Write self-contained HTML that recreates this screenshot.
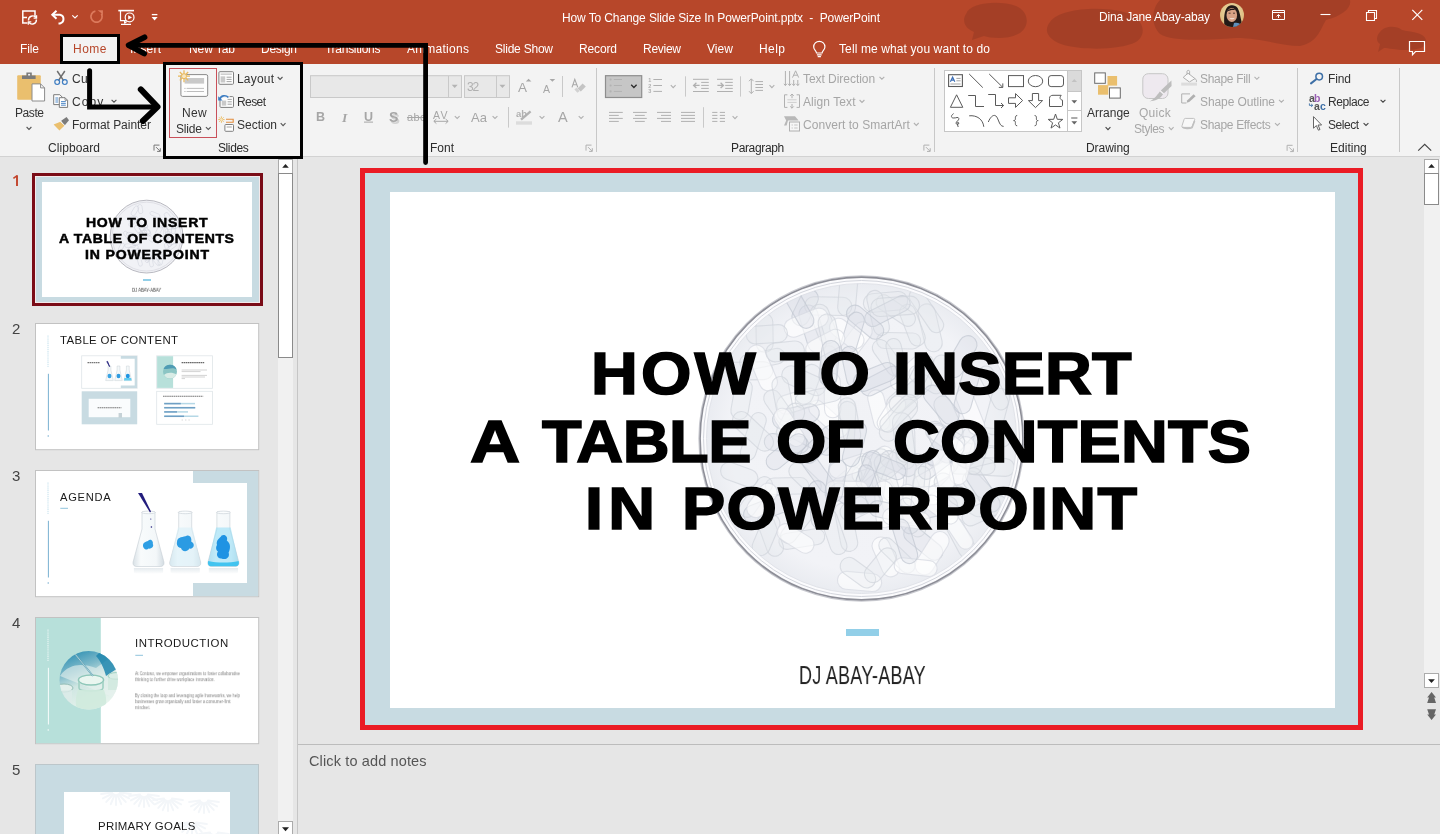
<!DOCTYPE html>
<html><head><meta charset="utf-8"><title>PowerPoint</title>
<style>
*{margin:0;padding:0;box-sizing:border-box}
html,body{width:1440px;height:834px;overflow:hidden;background:#e6e6e6;font-family:"Liberation Sans",sans-serif}
.a{position:absolute}
.t{position:absolute;white-space:pre;font-family:"Liberation Sans",sans-serif;will-change:transform}
svg{position:absolute;overflow:visible}
#app{position:absolute;left:0;top:0;width:1440px;height:834px;overflow:hidden;background:#e6e6e6}

</style></head>
<body>
<div id="app">
<!-- title bar + tabs -->
<div class="a" style="left:0;top:0;width:1440px;height:64px;background:#b7472a"></div>
<svg style="left:0;top:0" width="1440" height="64" viewBox="0 0 1440 64">
 <g fill="#7a2f1e" opacity="0.30">
  <path d="M966 14 C970 2 1000 0 1016 6 C1030 12 1030 28 1018 34 C1006 40 990 38 984 36 L972 40 L974 32 C964 28 962 20 966 14Z"/>
  <path d="M1050 22 C1060 8 1100 6 1124 12 C1144 18 1148 34 1136 42 C1120 50 1086 50 1068 46 C1050 42 1042 32 1050 22Z"/>
  <path d="M1160 0 H1350 C1352 8 1342 16 1326 20 C1320 30 1318 42 1300 46 C1280 46 1262 38 1236 38 C1206 40 1172 42 1160 34 C1150 24 1152 8 1160 0Z"/>
  <path d="M1380 32 C1384 26 1396 25 1402 30 C1410 32 1424 32 1426 40 C1428 48 1416 50 1404 50 C1396 50 1388 48 1384 48 L1378 52 L1380 44 C1376 42 1376 36 1380 32Z"/>
 </g>
</svg>
<!-- ribbon -->
<div class="a" style="left:0;top:64px;width:1440px;height:92px;background:#f3f3f3"></div>
<div class="a" style="left:0;top:156px;width:1440px;height:1px;background:#d2d2d2"></div>
<!-- home tab -->
<div class="a" style="left:60px;top:34px;width:60px;height:30px;background:#f3f3f3"></div>
<!-- group separators -->
<div class="a" style="left:163px;top:68px;width:1px;height:84px;background:#c8c8c8"></div>
<div class="a" style="left:596px;top:68px;width:1px;height:84px;background:#c8c8c8"></div>
<div class="a" style="left:934px;top:68px;width:1px;height:84px;background:#c8c8c8"></div>
<div class="a" style="left:1297px;top:68px;width:1px;height:84px;background:#c8c8c8"></div>
<div class="a" style="left:1399px;top:68px;width:1px;height:84px;background:#c8c8c8"></div>
<!-- left pane -->
<div class="a" style="left:297px;top:157px;width:1px;height:677px;background:#c6c6c6"></div>
<div class="a" style="left:278px;top:159px;width:15px;height:675px;background:#f1f1f1"></div>
<div class="a" style="left:278px;top:159px;width:15px;height:15px;background:#fff;border:1px solid #ababab"></div>
<div class="a" style="left:278px;top:173px;width:15px;height:185px;background:#fff;border:1px solid #8a8a8a"></div>
<div class="a" style="left:278px;top:821px;width:15px;height:14px;background:#fff;border:1px solid #ababab"></div>
<svg style="left:278px;top:159px" width="15" height="15"><path d="M4.2 8.8 L7.5 5 L10.8 8.8Z" fill="#222"/></svg>
<svg style="left:278px;top:821px" width="15" height="14"><path d="M4 6.3 L7.5 10.2 L11 6.3Z" fill="#222"/></svg>
<!-- right scrollbar -->
<div class="a" style="left:1424px;top:159px;width:16px;height:515px;background:#f1f1f1"></div>
<div class="a" style="left:1424px;top:159px;width:15px;height:15px;background:#fff;border:1px solid #ababab"></div>
<div class="a" style="left:1424px;top:173px;width:15px;height:32px;background:#fff;border:1px solid #8a8a8a"></div>
<div class="a" style="left:1424px;top:673px;width:15px;height:15px;background:#fff;border:1px solid #ababab"></div>
<svg style="left:1424px;top:159px" width="15" height="15"><path d="M4.2 8.8 L7.5 5 L10.8 8.8Z" fill="#222"/></svg>
<svg style="left:1424px;top:673px" width="15" height="15"><path d="M4.1 6.2 L7.5 10 L10.9 6.2Z" fill="#222"/></svg>
<svg style="left:1424px;top:690px" width="15" height="32"><g fill="#666"><path d="M7.6 2 L12 7.4 L10.2 7.4 L12 13 L3.2 13 L5 7.4 L3.2 7.4Z"/><path d="M7.6 30 L12 24.6 L10.2 24.6 L12 19.2 L3.2 19.2 L5 24.6 L3.2 24.6Z"/></g></svg>
<!-- notes -->
<div class="a" style="left:298px;top:744px;width:1142px;height:1px;background:#bcbcbc"></div>
<!-- main slide -->
<div class="a" style="left:360px;top:168px;width:1003px;height:562px;background:#c8dbe2;border:5px solid #ea1c25"></div>
<div class="a" style="left:390px;top:192px;width:945px;height:516px;background:#fff"></div>
<div class="a" style="left:846px;top:629px;width:33px;height:7px;background:#92cfe8"></div>
<svg style="left:0;top:0" width="1440" height="834" viewBox="0 0 1440 834">
<defs><radialGradient id="dg" cx="50%" cy="50%" r="50%"><stop offset="0" stop-color="#f1f2f6"/><stop offset="0.85" stop-color="#f2f3f7"/><stop offset="1" stop-color="#eaecf1"/></radialGradient><clipPath id="dc"><circle cx="861.5" cy="438.5" r="155"/></clipPath></defs>
<circle cx="861.5" cy="438.5" r="162.6" fill="#fafafc" stroke="#c9cad0" stroke-width="1.2"/>
<circle cx="861.5" cy="438.5" r="161.4" fill="#fbfbfd" stroke="#8d8e97" stroke-width="1.6"/>
<circle cx="861.5" cy="438.5" r="158" fill="none" stroke="#d3d5dc" stroke-width="1"/>
<circle cx="861.5" cy="438.5" r="155" fill="url(#dg)" stroke="#e1e3e9" stroke-width="1"/>
<g clip-path="url(#dc)" stroke-width="1.1">
<rect x="900.4" y="534.4" width="45.6" height="16.9" rx="8.5" fill="#d8dce4" fill-opacity="0.3" stroke="#c2c7d1" stroke-opacity="0.7" transform="rotate(39 923.3 542.9)"/>
<rect x="876.6" y="332.8" width="44.1" height="15.9" rx="8.0" fill="#e6e9ee" fill-opacity="0.28" stroke="#d0d4dc" stroke-opacity="0.7" transform="rotate(1 898.7 340.8)"/>
<rect x="804.7" y="410.9" width="47.5" height="15.9" rx="8.0" fill="#ffffff" fill-opacity="0.6" stroke="#d9dce3" stroke-opacity="0.8" transform="rotate(42 828.5 418.9)"/>
<rect x="962.7" y="427.8" width="48.5" height="17.5" rx="8.7" fill="#e6e9ee" fill-opacity="0.28" stroke="#d0d4dc" stroke-opacity="0.7" transform="rotate(6 987.0 436.6)"/>
<rect x="787.1" y="431.0" width="49.4" height="16.5" rx="8.2" fill="#d8dce4" fill-opacity="0.3" stroke="#c2c7d1" stroke-opacity="0.7" transform="rotate(28 811.8 439.3)"/>
<rect x="939.3" y="529.3" width="43.4" height="17.2" rx="8.6" fill="#e6e9ee" fill-opacity="0.28" stroke="#d0d4dc" stroke-opacity="0.7" transform="rotate(62 961.0 537.9)"/>
<rect x="848.2" y="456.5" width="48.4" height="15.9" rx="8.0" fill="#ffffff" fill-opacity="0.6" stroke="#d9dce3" stroke-opacity="0.8" transform="rotate(140 872.4 464.5)"/>
<rect x="973.4" y="402.6" width="47.1" height="18.1" rx="9.0" fill="#e6e9ee" fill-opacity="0.28" stroke="#d0d4dc" stroke-opacity="0.7" transform="rotate(105 996.9 411.6)"/>
<rect x="909.9" y="500.7" width="47.9" height="15.8" rx="7.9" fill="#d8dce4" fill-opacity="0.3" stroke="#c2c7d1" stroke-opacity="0.7" transform="rotate(166 933.9 508.6)"/>
<rect x="765.4" y="477.7" width="43.4" height="16.5" rx="8.3" fill="#e6e9ee" fill-opacity="0.28" stroke="#d0d4dc" stroke-opacity="0.7" transform="rotate(179 787.1 486.0)"/>
<rect x="882.1" y="436.5" width="46.6" height="19.0" rx="9.5" fill="#e6e9ee" fill-opacity="0.28" stroke="#d0d4dc" stroke-opacity="0.7" transform="rotate(89 905.5 446.0)"/>
<rect x="721.2" y="390.4" width="40.7" height="17.4" rx="8.7" fill="#e6e9ee" fill-opacity="0.28" stroke="#d0d4dc" stroke-opacity="0.7" transform="rotate(100 741.5 399.2)"/>
<rect x="865.8" y="483.7" width="42.2" height="18.7" rx="9.4" fill="#e6e9ee" fill-opacity="0.28" stroke="#d0d4dc" stroke-opacity="0.7" transform="rotate(62 886.9 493.1)"/>
<rect x="825.8" y="473.4" width="38.8" height="18.3" rx="9.1" fill="#e6e9ee" fill-opacity="0.28" stroke="#d0d4dc" stroke-opacity="0.7" transform="rotate(140 845.2 482.5)"/>
<rect x="788.3" y="319.4" width="48.8" height="18.8" rx="9.4" fill="#d8dce4" fill-opacity="0.3" stroke="#c2c7d1" stroke-opacity="0.7" transform="rotate(73 812.7 328.8)"/>
<rect x="946.1" y="403.1" width="48.6" height="17.0" rx="8.5" fill="#ffffff" fill-opacity="0.6" stroke="#d9dce3" stroke-opacity="0.8" transform="rotate(68 970.4 411.6)"/>
<rect x="884.0" y="388.1" width="38.8" height="18.2" rx="9.1" fill="#e6e9ee" fill-opacity="0.28" stroke="#d0d4dc" stroke-opacity="0.7" transform="rotate(139 903.4 397.2)"/>
<rect x="858.3" y="401.9" width="41.1" height="16.2" rx="8.1" fill="#ffffff" fill-opacity="0.6" stroke="#d9dce3" stroke-opacity="0.8" transform="rotate(76 878.8 410.0)"/>
<rect x="914.0" y="464.9" width="48.8" height="18.9" rx="9.5" fill="#e6e9ee" fill-opacity="0.28" stroke="#d0d4dc" stroke-opacity="0.7" transform="rotate(134 938.4 474.4)"/>
<rect x="837.4" y="572.5" width="44.3" height="17.9" rx="9.0" fill="#ffffff" fill-opacity="0.6" stroke="#d9dce3" stroke-opacity="0.8" transform="rotate(5 859.5 581.5)"/>
<rect x="905.8" y="319.1" width="48.6" height="17.4" rx="8.7" fill="#e6e9ee" fill-opacity="0.28" stroke="#d0d4dc" stroke-opacity="0.7" transform="rotate(77 930.1 327.8)"/>
<rect x="886.6" y="364.7" width="44.4" height="16.1" rx="8.1" fill="#ffffff" fill-opacity="0.6" stroke="#d9dce3" stroke-opacity="0.8" transform="rotate(138 908.9 372.8)"/>
<rect x="786.0" y="298.8" width="38.3" height="17.4" rx="8.7" fill="#d8dce4" fill-opacity="0.3" stroke="#c2c7d1" stroke-opacity="0.7" transform="rotate(116 805.1 307.5)"/>
<rect x="776.2" y="391.7" width="42.9" height="18.8" rx="9.4" fill="#ffffff" fill-opacity="0.6" stroke="#d9dce3" stroke-opacity="0.8" transform="rotate(163 797.6 401.1)"/>
<rect x="879.4" y="455.2" width="38.3" height="16.8" rx="8.4" fill="#d8dce4" fill-opacity="0.3" stroke="#c2c7d1" stroke-opacity="0.7" transform="rotate(25 898.5 463.6)"/>
<rect x="810.2" y="387.3" width="44.5" height="16.3" rx="8.1" fill="#ffffff" fill-opacity="0.6" stroke="#d9dce3" stroke-opacity="0.8" transform="rotate(89 832.4 395.5)"/>
<rect x="871.7" y="483.7" width="42.5" height="17.8" rx="8.9" fill="#ffffff" fill-opacity="0.6" stroke="#d9dce3" stroke-opacity="0.8" transform="rotate(99 893.0 492.6)"/>
<rect x="804.6" y="297.0" width="47.3" height="18.2" rx="9.1" fill="#e6e9ee" fill-opacity="0.28" stroke="#d0d4dc" stroke-opacity="0.7" transform="rotate(1 828.3 306.1)"/>
<rect x="959.0" y="479.1" width="40.1" height="17.8" rx="8.9" fill="#e6e9ee" fill-opacity="0.28" stroke="#d0d4dc" stroke-opacity="0.7" transform="rotate(46 979.1 488.1)"/>
<rect x="828.5" y="457.9" width="42.7" height="16.2" rx="8.1" fill="#ffffff" fill-opacity="0.6" stroke="#d9dce3" stroke-opacity="0.8" transform="rotate(162 849.9 466.0)"/>
<rect x="728.6" y="428.7" width="49.4" height="15.4" rx="7.7" fill="#e6e9ee" fill-opacity="0.28" stroke="#d0d4dc" stroke-opacity="0.7" transform="rotate(108 753.3 436.4)"/>
<rect x="826.7" y="286.7" width="41.7" height="17.8" rx="8.9" fill="#e6e9ee" fill-opacity="0.28" stroke="#d0d4dc" stroke-opacity="0.7" transform="rotate(95 847.6 295.6)"/>
<rect x="958.0" y="481.7" width="49.7" height="16.4" rx="8.2" fill="#d8dce4" fill-opacity="0.3" stroke="#c2c7d1" stroke-opacity="0.7" transform="rotate(57 982.9 489.9)"/>
<rect x="873.5" y="454.6" width="38.9" height="18.3" rx="9.1" fill="#e6e9ee" fill-opacity="0.28" stroke="#d0d4dc" stroke-opacity="0.7" transform="rotate(137 892.9 463.7)"/>
<rect x="823.8" y="415.9" width="45.7" height="16.8" rx="8.4" fill="#e6e9ee" fill-opacity="0.28" stroke="#d0d4dc" stroke-opacity="0.7" transform="rotate(93 846.7 424.3)"/>
<rect x="785.7" y="470.3" width="38.6" height="16.7" rx="8.4" fill="#e6e9ee" fill-opacity="0.28" stroke="#d0d4dc" stroke-opacity="0.7" transform="rotate(44 805.0 478.7)"/>
<rect x="890.7" y="317.3" width="43.5" height="15.9" rx="8.0" fill="#e6e9ee" fill-opacity="0.28" stroke="#d0d4dc" stroke-opacity="0.7" transform="rotate(69 912.5 325.2)"/>
<rect x="745.1" y="324.5" width="39.0" height="16.9" rx="8.5" fill="#e6e9ee" fill-opacity="0.28" stroke="#d0d4dc" stroke-opacity="0.7" transform="rotate(89 764.6 332.9)"/>
<rect x="938.3" y="347.6" width="45.5" height="18.0" rx="9.0" fill="#d8dce4" fill-opacity="0.3" stroke="#c2c7d1" stroke-opacity="0.7" transform="rotate(120 961.1 356.6)"/>
<rect x="803.0" y="314.6" width="40.9" height="18.7" rx="9.3" fill="#e6e9ee" fill-opacity="0.28" stroke="#d0d4dc" stroke-opacity="0.7" transform="rotate(69 823.5 324.0)"/>
<rect x="901.5" y="303.2" width="49.9" height="15.0" rx="7.5" fill="#e6e9ee" fill-opacity="0.28" stroke="#d0d4dc" stroke-opacity="0.7" transform="rotate(56 926.4 310.7)"/>
<rect x="796.0" y="466.0" width="44.6" height="15.3" rx="7.7" fill="#d8dce4" fill-opacity="0.3" stroke="#c2c7d1" stroke-opacity="0.7" transform="rotate(54 818.3 473.7)"/>
<rect x="837.1" y="329.9" width="39.3" height="18.8" rx="9.4" fill="#ffffff" fill-opacity="0.6" stroke="#d9dce3" stroke-opacity="0.8" transform="rotate(127 856.7 339.3)"/>
<rect x="778.7" y="531.0" width="46.2" height="16.0" rx="8.0" fill="#e6e9ee" fill-opacity="0.28" stroke="#d0d4dc" stroke-opacity="0.7" transform="rotate(171 801.8 539.0)"/>
<rect x="838.0" y="563.8" width="39.8" height="17.7" rx="8.9" fill="#e6e9ee" fill-opacity="0.28" stroke="#d0d4dc" stroke-opacity="0.7" transform="rotate(36 857.9 572.7)"/>
<rect x="821.5" y="518.6" width="49.3" height="16.9" rx="8.4" fill="#e6e9ee" fill-opacity="0.28" stroke="#d0d4dc" stroke-opacity="0.7" transform="rotate(79 846.1 527.1)"/>
<rect x="828.5" y="490.3" width="42.6" height="16.1" rx="8.0" fill="#d8dce4" fill-opacity="0.3" stroke="#c2c7d1" stroke-opacity="0.7" transform="rotate(34 849.8 498.3)"/>
<rect x="965.3" y="457.8" width="49.2" height="17.8" rx="8.9" fill="#e6e9ee" fill-opacity="0.28" stroke="#d0d4dc" stroke-opacity="0.7" transform="rotate(3 989.9 466.7)"/>
<rect x="948.7" y="458.3" width="46.4" height="16.0" rx="8.0" fill="#e6e9ee" fill-opacity="0.28" stroke="#d0d4dc" stroke-opacity="0.7" transform="rotate(1 971.9 466.3)"/>
<rect x="907.0" y="474.6" width="43.4" height="18.6" rx="9.3" fill="#ffffff" fill-opacity="0.6" stroke="#d9dce3" stroke-opacity="0.8" transform="rotate(67 928.8 483.9)"/>
<rect x="873.6" y="303.0" width="44.4" height="15.2" rx="7.6" fill="#e6e9ee" fill-opacity="0.28" stroke="#d0d4dc" stroke-opacity="0.7" transform="rotate(34 895.8 310.6)"/>
<rect x="772.1" y="407.1" width="47.6" height="18.4" rx="9.2" fill="#d8dce4" fill-opacity="0.3" stroke="#c2c7d1" stroke-opacity="0.7" transform="rotate(167 795.9 416.3)"/>
<rect x="952.7" y="441.5" width="39.0" height="18.6" rx="9.3" fill="#d8dce4" fill-opacity="0.3" stroke="#c2c7d1" stroke-opacity="0.7" transform="rotate(134 972.2 450.8)"/>
<rect x="851.1" y="462.8" width="47.8" height="17.4" rx="8.7" fill="#e6e9ee" fill-opacity="0.28" stroke="#d0d4dc" stroke-opacity="0.7" transform="rotate(112 875.0 471.5)"/>
<rect x="867.2" y="349.6" width="41.2" height="16.4" rx="8.2" fill="#e6e9ee" fill-opacity="0.28" stroke="#d0d4dc" stroke-opacity="0.7" transform="rotate(54 887.8 357.8)"/>
<rect x="872.1" y="405.2" width="38.8" height="17.0" rx="8.5" fill="#ffffff" fill-opacity="0.6" stroke="#d9dce3" stroke-opacity="0.8" transform="rotate(122 891.5 413.7)"/>
<rect x="837.9" y="465.1" width="38.4" height="17.0" rx="8.5" fill="#e6e9ee" fill-opacity="0.28" stroke="#d0d4dc" stroke-opacity="0.7" transform="rotate(123 857.1 473.6)"/>
<rect x="862.6" y="469.4" width="49.2" height="17.2" rx="8.6" fill="#e6e9ee" fill-opacity="0.28" stroke="#d0d4dc" stroke-opacity="0.7" transform="rotate(74 887.2 478.0)"/>
<rect x="827.3" y="324.6" width="38.9" height="18.3" rx="9.2" fill="#ffffff" fill-opacity="0.6" stroke="#d9dce3" stroke-opacity="0.8" transform="rotate(38 846.8 333.8)"/>
<rect x="774.9" y="515.9" width="45.5" height="15.7" rx="7.8" fill="#e6e9ee" fill-opacity="0.28" stroke="#d0d4dc" stroke-opacity="0.7" transform="rotate(128 797.6 523.8)"/>
<rect x="908.4" y="543.8" width="47.7" height="18.6" rx="9.3" fill="#ffffff" fill-opacity="0.6" stroke="#d9dce3" stroke-opacity="0.8" transform="rotate(122 932.2 553.1)"/>
<rect x="863.3" y="292.6" width="44.4" height="18.6" rx="9.3" fill="#e6e9ee" fill-opacity="0.28" stroke="#d0d4dc" stroke-opacity="0.7" transform="rotate(175 885.5 301.9)"/>
<rect x="969.7" y="380.5" width="47.5" height="15.0" rx="7.5" fill="#e6e9ee" fill-opacity="0.28" stroke="#d0d4dc" stroke-opacity="0.7" transform="rotate(63 993.5 388.0)"/>
<rect x="739.4" y="351.5" width="45.8" height="15.6" rx="7.8" fill="#e6e9ee" fill-opacity="0.28" stroke="#d0d4dc" stroke-opacity="0.7" transform="rotate(168 762.3 359.3)"/>
<rect x="885.4" y="385.0" width="50.0" height="17.2" rx="8.6" fill="#e6e9ee" fill-opacity="0.28" stroke="#d0d4dc" stroke-opacity="0.7" transform="rotate(140 910.4 393.6)"/>
<rect x="907.1" y="371.2" width="39.0" height="16.6" rx="8.3" fill="#e6e9ee" fill-opacity="0.28" stroke="#d0d4dc" stroke-opacity="0.7" transform="rotate(32 926.6 379.5)"/>
<rect x="876.6" y="350.3" width="39.6" height="15.1" rx="7.6" fill="#e6e9ee" fill-opacity="0.28" stroke="#d0d4dc" stroke-opacity="0.7" transform="rotate(76 896.4 357.9)"/>
<rect x="958.7" y="450.4" width="40.5" height="15.4" rx="7.7" fill="#e6e9ee" fill-opacity="0.28" stroke="#d0d4dc" stroke-opacity="0.7" transform="rotate(167 979.0 458.1)"/>
<rect x="924.5" y="366.4" width="39.5" height="16.0" rx="8.0" fill="#e6e9ee" fill-opacity="0.28" stroke="#d0d4dc" stroke-opacity="0.7" transform="rotate(76 944.2 374.4)"/>
<rect x="855.1" y="305.0" width="45.8" height="16.0" rx="8.0" fill="#e6e9ee" fill-opacity="0.28" stroke="#d0d4dc" stroke-opacity="0.7" transform="rotate(77 878.1 313.0)"/>
<rect x="764.2" y="435.0" width="44.5" height="16.8" rx="8.4" fill="#d8dce4" fill-opacity="0.3" stroke="#c2c7d1" stroke-opacity="0.7" transform="rotate(6 786.4 443.4)"/>
<rect x="726.1" y="361.9" width="46.8" height="17.9" rx="9.0" fill="#e6e9ee" fill-opacity="0.28" stroke="#d0d4dc" stroke-opacity="0.7" transform="rotate(179 749.5 370.9)"/>
<rect x="831.5" y="435.4" width="46.0" height="17.3" rx="8.7" fill="#d8dce4" fill-opacity="0.3" stroke="#c2c7d1" stroke-opacity="0.7" transform="rotate(104 854.5 444.0)"/>
<rect x="860.9" y="495.1" width="46.8" height="18.2" rx="9.1" fill="#ffffff" fill-opacity="0.6" stroke="#d9dce3" stroke-opacity="0.8" transform="rotate(87 884.3 504.3)"/>
<rect x="748.4" y="526.6" width="44.0" height="16.8" rx="8.4" fill="#e6e9ee" fill-opacity="0.28" stroke="#d0d4dc" stroke-opacity="0.7" transform="rotate(70 770.4 535.0)"/>
<rect x="738.3" y="359.0" width="48.4" height="18.0" rx="9.0" fill="#ffffff" fill-opacity="0.6" stroke="#d9dce3" stroke-opacity="0.8" transform="rotate(67 762.5 368.0)"/>
<rect x="862.8" y="303.2" width="49.1" height="15.8" rx="7.9" fill="#d8dce4" fill-opacity="0.3" stroke="#c2c7d1" stroke-opacity="0.7" transform="rotate(153 887.4 311.1)"/>
<rect x="910.4" y="468.5" width="45.6" height="15.6" rx="7.8" fill="#ffffff" fill-opacity="0.6" stroke="#d9dce3" stroke-opacity="0.8" transform="rotate(150 933.2 476.3)"/>
<rect x="808.4" y="358.2" width="40.6" height="15.8" rx="7.9" fill="#e6e9ee" fill-opacity="0.28" stroke="#d0d4dc" stroke-opacity="0.7" transform="rotate(90 828.8 366.2)"/>
<rect x="864.7" y="548.2" width="42.0" height="17.6" rx="8.8" fill="#ffffff" fill-opacity="0.6" stroke="#d9dce3" stroke-opacity="0.8" transform="rotate(66 885.8 557.0)"/>
<rect x="860.5" y="457.4" width="46.4" height="16.7" rx="8.3" fill="#d8dce4" fill-opacity="0.3" stroke="#c2c7d1" stroke-opacity="0.7" transform="rotate(22 883.7 465.7)"/>
<rect x="826.2" y="412.3" width="46.7" height="17.4" rx="8.7" fill="#e6e9ee" fill-opacity="0.28" stroke="#d0d4dc" stroke-opacity="0.7" transform="rotate(80 849.5 421.0)"/>
<rect x="925.5" y="408.7" width="45.6" height="17.5" rx="8.8" fill="#e6e9ee" fill-opacity="0.28" stroke="#d0d4dc" stroke-opacity="0.7" transform="rotate(66 948.3 417.5)"/>
<rect x="843.4" y="313.6" width="43.5" height="17.1" rx="8.5" fill="#d8dce4" fill-opacity="0.3" stroke="#c2c7d1" stroke-opacity="0.7" transform="rotate(40 865.1 322.1)"/>
<rect x="955.9" y="445.1" width="43.5" height="15.9" rx="7.9" fill="#e6e9ee" fill-opacity="0.28" stroke="#d0d4dc" stroke-opacity="0.7" transform="rotate(106 977.7 453.1)"/>
<rect x="928.9" y="482.4" width="40.0" height="18.2" rx="9.1" fill="#e6e9ee" fill-opacity="0.28" stroke="#d0d4dc" stroke-opacity="0.7" transform="rotate(59 948.9 491.5)"/>
<rect x="848.3" y="462.0" width="40.2" height="15.6" rx="7.8" fill="#d8dce4" fill-opacity="0.3" stroke="#c2c7d1" stroke-opacity="0.7" transform="rotate(112 868.4 469.8)"/>
<rect x="848.1" y="478.8" width="44.4" height="15.5" rx="7.7" fill="#d8dce4" fill-opacity="0.3" stroke="#c2c7d1" stroke-opacity="0.7" transform="rotate(73 870.3 486.5)"/>
<rect x="874.7" y="547.7" width="44.5" height="15.3" rx="7.7" fill="#e6e9ee" fill-opacity="0.28" stroke="#d0d4dc" stroke-opacity="0.7" transform="rotate(44 896.9 555.4)"/>
<rect x="893.2" y="466.8" width="44.9" height="18.3" rx="9.1" fill="#e6e9ee" fill-opacity="0.28" stroke="#d0d4dc" stroke-opacity="0.7" transform="rotate(94 915.7 476.0)"/>
<rect x="920.8" y="433.7" width="41.8" height="18.7" rx="9.3" fill="#d8dce4" fill-opacity="0.3" stroke="#c2c7d1" stroke-opacity="0.7" transform="rotate(64 941.7 443.1)"/>
<rect x="937.8" y="451.5" width="48.7" height="18.1" rx="9.0" fill="#ffffff" fill-opacity="0.6" stroke="#d9dce3" stroke-opacity="0.8" transform="rotate(104 962.2 460.6)"/>
<rect x="873.6" y="411.0" width="49.6" height="18.1" rx="9.1" fill="#e6e9ee" fill-opacity="0.28" stroke="#d0d4dc" stroke-opacity="0.7" transform="rotate(130 898.4 420.1)"/>
<rect x="882.4" y="502.8" width="46.0" height="17.6" rx="8.8" fill="#d8dce4" fill-opacity="0.3" stroke="#c2c7d1" stroke-opacity="0.7" transform="rotate(70 905.4 511.6)"/>
<rect x="915.8" y="456.1" width="39.1" height="16.3" rx="8.1" fill="#d8dce4" fill-opacity="0.3" stroke="#c2c7d1" stroke-opacity="0.7" transform="rotate(143 935.4 464.3)"/>
<rect x="889.7" y="495.1" width="39.3" height="17.6" rx="8.8" fill="#ffffff" fill-opacity="0.6" stroke="#d9dce3" stroke-opacity="0.8" transform="rotate(80 909.4 503.9)"/>
<rect x="744.4" y="526.1" width="43.1" height="17.8" rx="8.9" fill="#e6e9ee" fill-opacity="0.28" stroke="#d0d4dc" stroke-opacity="0.7" transform="rotate(113 766.0 535.0)"/>
<rect x="758.7" y="399.4" width="40.4" height="17.0" rx="8.5" fill="#e6e9ee" fill-opacity="0.28" stroke="#d0d4dc" stroke-opacity="0.7" transform="rotate(55 778.9 407.9)"/>
<rect x="894.1" y="559.2" width="43.1" height="15.8" rx="7.9" fill="#ffffff" fill-opacity="0.6" stroke="#d9dce3" stroke-opacity="0.8" transform="rotate(6 915.7 567.1)"/>
<rect x="895.9" y="368.2" width="46.0" height="15.9" rx="8.0" fill="#e6e9ee" fill-opacity="0.28" stroke="#d0d4dc" stroke-opacity="0.7" transform="rotate(117 918.9 376.2)"/>
<rect x="831.2" y="324.7" width="42.5" height="16.1" rx="8.1" fill="#d8dce4" fill-opacity="0.3" stroke="#c2c7d1" stroke-opacity="0.7" transform="rotate(107 852.4 332.8)"/>
<rect x="804.2" y="334.8" width="41.9" height="18.6" rx="9.3" fill="#ffffff" fill-opacity="0.6" stroke="#d9dce3" stroke-opacity="0.8" transform="rotate(152 825.2 344.1)"/>
<rect x="783.3" y="313.3" width="46.1" height="18.9" rx="9.4" fill="#ffffff" fill-opacity="0.6" stroke="#d9dce3" stroke-opacity="0.8" transform="rotate(158 806.3 322.7)"/>
<rect x="923.8" y="427.3" width="42.6" height="18.9" rx="9.5" fill="#e6e9ee" fill-opacity="0.28" stroke="#d0d4dc" stroke-opacity="0.7" transform="rotate(30 945.1 436.8)"/>
<rect x="787.3" y="375.2" width="41.2" height="18.2" rx="9.1" fill="#e6e9ee" fill-opacity="0.28" stroke="#d0d4dc" stroke-opacity="0.7" transform="rotate(110 807.9 384.3)"/>
<rect x="871.0" y="297.3" width="48.7" height="18.3" rx="9.1" fill="#e6e9ee" fill-opacity="0.28" stroke="#d0d4dc" stroke-opacity="0.7" transform="rotate(176 895.3 306.4)"/>
<rect x="805.3" y="329.8" width="49.6" height="17.6" rx="8.8" fill="#e6e9ee" fill-opacity="0.28" stroke="#d0d4dc" stroke-opacity="0.7" transform="rotate(78 830.2 338.6)"/>
<rect x="825.6" y="481.2" width="42.6" height="15.5" rx="7.8" fill="#ffffff" fill-opacity="0.6" stroke="#d9dce3" stroke-opacity="0.8" transform="rotate(1 846.9 489.0)"/>
<rect x="719.9" y="465.8" width="38.6" height="17.5" rx="8.8" fill="#e6e9ee" fill-opacity="0.28" stroke="#d0d4dc" stroke-opacity="0.7" transform="rotate(20 739.2 474.6)"/>
<rect x="810.6" y="523.7" width="46.5" height="16.7" rx="8.3" fill="#e6e9ee" fill-opacity="0.28" stroke="#d0d4dc" stroke-opacity="0.7" transform="rotate(71 833.8 532.0)"/>
<rect x="902.7" y="486.7" width="46.4" height="18.3" rx="9.2" fill="#ffffff" fill-opacity="0.6" stroke="#d9dce3" stroke-opacity="0.8" transform="rotate(176 925.9 495.9)"/>
<rect x="780.6" y="371.5" width="46.4" height="18.4" rx="9.2" fill="#e6e9ee" fill-opacity="0.28" stroke="#d0d4dc" stroke-opacity="0.7" transform="rotate(24 803.8 380.7)"/>
<rect x="918.5" y="395.6" width="45.6" height="18.3" rx="9.1" fill="#d8dce4" fill-opacity="0.3" stroke="#c2c7d1" stroke-opacity="0.7" transform="rotate(50 941.3 404.7)"/>
<rect x="926.7" y="432.3" width="40.0" height="16.4" rx="8.2" fill="#ffffff" fill-opacity="0.6" stroke="#d9dce3" stroke-opacity="0.8" transform="rotate(38 946.7 440.4)"/>
<rect x="859.0" y="372.4" width="44.9" height="17.2" rx="8.6" fill="#d8dce4" fill-opacity="0.3" stroke="#c2c7d1" stroke-opacity="0.7" transform="rotate(153 881.4 381.0)"/>
<rect x="794.6" y="389.3" width="47.1" height="15.4" rx="7.7" fill="#e6e9ee" fill-opacity="0.28" stroke="#d0d4dc" stroke-opacity="0.7" transform="rotate(167 818.2 397.0)"/>
<rect x="838.9" y="497.4" width="42.8" height="18.2" rx="9.1" fill="#e6e9ee" fill-opacity="0.28" stroke="#d0d4dc" stroke-opacity="0.7" transform="rotate(154 860.3 506.4)"/>
<rect x="831.2" y="358.9" width="41.9" height="16.2" rx="8.1" fill="#d8dce4" fill-opacity="0.3" stroke="#c2c7d1" stroke-opacity="0.7" transform="rotate(78 852.2 367.0)"/>
<rect x="879.0" y="428.1" width="49.6" height="18.7" rx="9.3" fill="#e6e9ee" fill-opacity="0.28" stroke="#d0d4dc" stroke-opacity="0.7" transform="rotate(83 903.7 437.4)"/>
<rect x="852.4" y="367.4" width="45.4" height="18.9" rx="9.5" fill="#d8dce4" fill-opacity="0.3" stroke="#c2c7d1" stroke-opacity="0.7" transform="rotate(158 875.1 376.9)"/>
<rect x="945.9" y="491.8" width="43.8" height="18.6" rx="9.3" fill="#e6e9ee" fill-opacity="0.28" stroke="#d0d4dc" stroke-opacity="0.7" transform="rotate(30 967.8 501.2)"/>
<rect x="933.3" y="520.9" width="46.7" height="15.1" rx="7.6" fill="#ffffff" fill-opacity="0.6" stroke="#d9dce3" stroke-opacity="0.8" transform="rotate(56 956.6 528.5)"/>
<rect x="765.7" y="342.0" width="38.8" height="18.8" rx="9.4" fill="#e6e9ee" fill-opacity="0.28" stroke="#d0d4dc" stroke-opacity="0.7" transform="rotate(174 785.1 351.4)"/>
<rect x="760.2" y="390.7" width="45.3" height="16.6" rx="8.3" fill="#e6e9ee" fill-opacity="0.28" stroke="#d0d4dc" stroke-opacity="0.7" transform="rotate(79 782.9 399.0)"/>
<rect x="868.9" y="504.0" width="47.2" height="15.9" rx="7.9" fill="#d8dce4" fill-opacity="0.3" stroke="#c2c7d1" stroke-opacity="0.7" transform="rotate(12 892.5 512.0)"/>
<rect x="891.0" y="509.4" width="41.8" height="16.0" rx="8.0" fill="#e6e9ee" fill-opacity="0.28" stroke="#d0d4dc" stroke-opacity="0.7" transform="rotate(63 911.9 517.4)"/>
<rect x="921.7" y="501.9" width="38.6" height="15.3" rx="7.7" fill="#ffffff" fill-opacity="0.6" stroke="#d9dce3" stroke-opacity="0.8" transform="rotate(36 941.0 509.5)"/>
<rect x="794.6" y="495.8" width="48.0" height="17.6" rx="8.8" fill="#d8dce4" fill-opacity="0.3" stroke="#c2c7d1" stroke-opacity="0.7" transform="rotate(85 818.6 504.6)"/>
<rect x="806.7" y="354.1" width="45.4" height="18.0" rx="9.0" fill="#d8dce4" fill-opacity="0.3" stroke="#c2c7d1" stroke-opacity="0.7" transform="rotate(96 829.4 363.1)"/>
<rect x="746.5" y="325.5" width="41.2" height="17.7" rx="8.8" fill="#e6e9ee" fill-opacity="0.28" stroke="#d0d4dc" stroke-opacity="0.7" transform="rotate(176 767.0 334.3)"/>
<rect x="875.4" y="405.3" width="46.7" height="16.1" rx="8.0" fill="#e6e9ee" fill-opacity="0.28" stroke="#d0d4dc" stroke-opacity="0.7" transform="rotate(135 898.7 413.3)"/>
<rect x="769.9" y="413.4" width="41.1" height="18.5" rx="9.2" fill="#e6e9ee" fill-opacity="0.28" stroke="#d0d4dc" stroke-opacity="0.7" transform="rotate(116 790.5 422.6)"/>
<rect x="895.7" y="483.1" width="49.6" height="15.8" rx="7.9" fill="#e6e9ee" fill-opacity="0.28" stroke="#d0d4dc" stroke-opacity="0.7" transform="rotate(97 920.5 491.0)"/>
<rect x="728.2" y="422.3" width="49.6" height="18.1" rx="9.1" fill="#e6e9ee" fill-opacity="0.28" stroke="#d0d4dc" stroke-opacity="0.7" transform="rotate(43 753.0 431.3)"/>
<rect x="732.8" y="488.8" width="46.1" height="16.0" rx="8.0" fill="#e6e9ee" fill-opacity="0.28" stroke="#d0d4dc" stroke-opacity="0.7" transform="rotate(125 755.8 496.9)"/>
<rect x="918.7" y="438.2" width="42.5" height="15.8" rx="7.9" fill="#d8dce4" fill-opacity="0.3" stroke="#c2c7d1" stroke-opacity="0.7" transform="rotate(121 940.0 446.1)"/>
<rect x="942.6" y="381.7" width="48.3" height="17.0" rx="8.5" fill="#d8dce4" fill-opacity="0.3" stroke="#c2c7d1" stroke-opacity="0.7" transform="rotate(106 966.8 390.2)"/>
<rect x="922.0" y="462.5" width="42.5" height="16.4" rx="8.2" fill="#ffffff" fill-opacity="0.6" stroke="#d9dce3" stroke-opacity="0.8" transform="rotate(77 943.3 470.7)"/>
<rect x="779.5" y="301.8" width="40.8" height="15.7" rx="7.9" fill="#d8dce4" fill-opacity="0.3" stroke="#c2c7d1" stroke-opacity="0.7" transform="rotate(60 799.9 309.6)"/>
<rect x="860.3" y="556.6" width="40.1" height="17.4" rx="8.7" fill="#e6e9ee" fill-opacity="0.28" stroke="#d0d4dc" stroke-opacity="0.7" transform="rotate(130 880.4 565.3)"/>
<rect x="960.6" y="502.3" width="48.2" height="16.9" rx="8.5" fill="#e6e9ee" fill-opacity="0.28" stroke="#d0d4dc" stroke-opacity="0.7" transform="rotate(155 984.7 510.8)"/>
<rect x="882.6" y="510.3" width="47.8" height="16.9" rx="8.4" fill="#ffffff" fill-opacity="0.6" stroke="#d9dce3" stroke-opacity="0.8" transform="rotate(8 906.5 518.7)"/>
<rect x="882.2" y="533.0" width="45.7" height="16.8" rx="8.4" fill="#d8dce4" fill-opacity="0.3" stroke="#c2c7d1" stroke-opacity="0.7" transform="rotate(73 905.1 541.4)"/>
<rect x="775.3" y="529.9" width="40.5" height="17.1" rx="8.5" fill="#ffffff" fill-opacity="0.6" stroke="#d9dce3" stroke-opacity="0.8" transform="rotate(32 795.6 538.4)"/>
<rect x="814.5" y="472.0" width="42.6" height="17.6" rx="8.8" fill="#d8dce4" fill-opacity="0.3" stroke="#c2c7d1" stroke-opacity="0.7" transform="rotate(99 835.8 480.8)"/>
<rect x="796.2" y="436.2" width="46.7" height="16.6" rx="8.3" fill="#d8dce4" fill-opacity="0.3" stroke="#c2c7d1" stroke-opacity="0.7" transform="rotate(135 819.6 444.5)"/>
<rect x="768.1" y="418.9" width="42.3" height="17.0" rx="8.5" fill="#ffffff" fill-opacity="0.6" stroke="#d9dce3" stroke-opacity="0.8" transform="rotate(57 789.3 427.4)"/>
<rect x="742.6" y="499.9" width="47.8" height="18.0" rx="9.0" fill="#d8dce4" fill-opacity="0.3" stroke="#c2c7d1" stroke-opacity="0.7" transform="rotate(159 766.5 509.0)"/>
<rect x="742.7" y="491.3" width="38.6" height="18.2" rx="9.1" fill="#ffffff" fill-opacity="0.6" stroke="#d9dce3" stroke-opacity="0.8" transform="rotate(127 762.0 500.4)"/>
<rect x="762.8" y="443.3" width="47.5" height="16.7" rx="8.4" fill="#d8dce4" fill-opacity="0.3" stroke="#c2c7d1" stroke-opacity="0.7" transform="rotate(141 786.5 451.7)"/>
</g></svg>
<!-- thumbnails -->
<svg style="left:0;top:0" width="30" height="200"><path d="M17 175.3 V185.9" stroke="#c2432a" stroke-width="1.9"/><path d="M13.4 178.4 L16.8 175.8" stroke="#c2432a" stroke-width="1.5"/></svg>
<div class="a" style="left:32px;top:172.5px;width:230.5px;height:133.5px;background:#f4e9ea;border:3px solid #7a0c17"></div>
<div class="a" style="left:36.3px;top:176.8px;width:222.4px;height:125px;background:#c8dbe2"></div>
<div class="a" style="left:42px;top:182px;width:210.4px;height:115px;background:#fff"></div>
<div class="a" style="left:143px;top:279.3px;width:7.8px;height:1.5px;background:#92cfe8"></div>
<svg style="left:0;top:0" width="300" height="834" viewBox="0 0 300 834">
<circle cx="146.6" cy="236.6" r="36.4" fill="#eff0f4" stroke="#a9aab2" stroke-width="0.8"/>
<circle cx="146.6" cy="236.6" r="34.4" fill="#f1f2f6" stroke="#d8d9e0" stroke-width="0.7"/>
<g fill="none" stroke="#c3c7d2" stroke-opacity="0.7" stroke-width="0.5">
<rect x="143.7" y="256.2" width="9.1" height="4.0" rx="2.0" transform="rotate(113 148.2 258.2)"/>
<rect x="144.4" y="236.1" width="10.5" height="3.7" rx="1.8" transform="rotate(42 149.7 238.0)"/>
<rect x="161.5" y="234.1" width="10.5" height="3.9" rx="1.9" transform="rotate(115 166.8 236.0)"/>
<rect x="155.0" y="253.6" width="10.6" height="3.9" rx="2.0" transform="rotate(133 160.3 255.6)"/>
<rect x="137.9" y="228.1" width="10.3" height="4.0" rx="2.0" transform="rotate(54 143.1 230.0)"/>
<rect x="168.7" y="239.8" width="9.4" height="4.1" rx="2.1" transform="rotate(158 173.4 241.9)"/>
<rect x="135.7" y="207.0" width="9.2" height="4.2" rx="2.1" transform="rotate(80 140.3 209.1)"/>
<rect x="167.8" y="224.0" width="8.3" height="3.5" rx="1.8" transform="rotate(39 171.9 225.7)"/>
<rect x="160.6" y="230.6" width="9.9" height="3.7" rx="1.9" transform="rotate(91 165.6 232.4)"/>
<rect x="128.6" y="246.1" width="9.8" height="4.0" rx="2.0" transform="rotate(163 133.5 248.0)"/>
<rect x="129.6" y="208.6" width="10.6" height="4.4" rx="2.2" transform="rotate(121 134.9 210.8)"/>
<rect x="155.3" y="257.8" width="10.9" height="4.3" rx="2.2" transform="rotate(102 160.8 259.9)"/>
<rect x="138.3" y="221.5" width="10.5" height="4.0" rx="2.0" transform="rotate(51 143.6 223.4)"/>
<rect x="166.2" y="245.4" width="11.0" height="3.5" rx="1.7" transform="rotate(144 171.6 247.1)"/>
<rect x="132.5" y="240.6" width="8.9" height="4.2" rx="2.1" transform="rotate(157 136.9 242.7)"/>
<rect x="164.7" y="240.9" width="8.1" height="4.1" rx="2.1" transform="rotate(60 168.8 242.9)"/>
<rect x="163.2" y="214.6" width="9.5" height="4.4" rx="2.2" transform="rotate(56 167.9 216.8)"/>
<rect x="162.7" y="245.4" width="8.1" height="3.6" rx="1.8" transform="rotate(73 166.8 247.2)"/>
<rect x="133.6" y="227.0" width="8.1" height="4.3" rx="2.1" transform="rotate(56 137.7 229.2)"/>
<rect x="168.9" y="227.5" width="9.1" height="3.9" rx="1.9" transform="rotate(94 173.5 229.4)"/>
<rect x="127.7" y="216.8" width="9.7" height="4.0" rx="2.0" transform="rotate(169 132.6 218.8)"/>
<rect x="122.2" y="233.9" width="10.2" height="3.6" rx="1.8" transform="rotate(54 127.3 235.7)"/>
<rect x="162.8" y="231.9" width="9.6" height="3.4" rx="1.7" transform="rotate(75 167.6 233.6)"/>
<rect x="138.0" y="232.6" width="9.8" height="4.0" rx="2.0" transform="rotate(11 143.0 234.6)"/>
<rect x="127.6" y="220.3" width="10.0" height="3.8" rx="1.9" transform="rotate(127 132.6 222.2)"/>
<rect x="142.2" y="230.2" width="8.2" height="4.1" rx="2.0" transform="rotate(173 146.3 232.2)"/>
<rect x="141.6" y="254.6" width="9.8" height="3.7" rx="1.9" transform="rotate(66 146.5 256.5)"/>
<rect x="134.9" y="251.2" width="9.8" height="3.7" rx="1.9" transform="rotate(68 139.7 253.1)"/>
<rect x="142.4" y="229.8" width="9.7" height="4.1" rx="2.1" transform="rotate(56 147.3 231.8)"/>
<rect x="146.8" y="260.8" width="8.7" height="3.6" rx="1.8" transform="rotate(78 151.1 262.6)"/>
<rect x="139.1" y="225.8" width="9.0" height="3.7" rx="1.9" transform="rotate(150 143.6 227.7)"/>
<rect x="117.2" y="245.0" width="8.5" height="3.7" rx="1.9" transform="rotate(117 121.4 246.9)"/>
<rect x="157.1" y="221.8" width="8.7" height="3.5" rx="1.8" transform="rotate(95 161.4 223.5)"/>
<rect x="150.9" y="259.4" width="10.5" height="3.6" rx="1.8" transform="rotate(50 156.2 261.2)"/>
<rect x="149.7" y="212.7" width="10.4" height="3.7" rx="1.9" transform="rotate(23 154.9 214.6)"/>
<rect x="135.4" y="260.0" width="8.8" height="3.7" rx="1.9" transform="rotate(75 139.8 261.9)"/>
<rect x="124.7" y="243.9" width="10.8" height="3.6" rx="1.8" transform="rotate(1 130.1 245.7)"/>
<rect x="167.0" y="225.1" width="11.0" height="3.8" rx="1.9" transform="rotate(171 172.4 227.0)"/>
<rect x="153.9" y="228.4" width="10.2" height="4.2" rx="2.1" transform="rotate(119 159.0 230.5)"/>
<rect x="126.4" y="232.9" width="9.0" height="3.6" rx="1.8" transform="rotate(12 130.9 234.7)"/>
</g>
<rect x="35.5" y="323.5" width="223.2" height="126.2" fill="#fff" stroke="#c2c2c2" stroke-width="1"/>
<path d="M48 335.5 V367.5" stroke="#b4d8e8" stroke-width="1.3" stroke-dasharray="1.2 0.7" opacity="0.6"/>
<path d="M48.4 373.8 V430.5" stroke="#6aa7cc" stroke-width="0.9"/>
<circle cx="48.2" cy="436.0" r="0.7" fill="#6aa7cc"/>
<rect x="81.7" y="355.8" width="55.5" height="32.5" fill="#fff" stroke="#dfe5e8" stroke-width="0.8"/>
<path d="M120.8 356 H137 V388 H120.8 V385.5 H134.7 V358.8 H120.8Z" fill="#c8dbe2"/>
<path d="M87.5 362.6 H99.5" stroke="#777" stroke-width="1.1" stroke-dasharray="1.6 0.5"/>
<path d="M108.1 366 V370 L105.7 380.6 H113.3 L110.9 370 V366Z" fill="#f4f8fa" stroke="#c8d0d6" stroke-width="0.5"/>
<ellipse cx="109.5" cy="376" rx="2" ry="2.2" fill="#3aa3e3"/>
<path d="M117.1 366 V370 L114.7 380.6 H122.3 L119.9 370 V366Z" fill="#f4f8fa" stroke="#c8d0d6" stroke-width="0.5"/>
<ellipse cx="118.5" cy="376" rx="2" ry="2.2" fill="#2f9be0"/>
<path d="M126.39999999999999 366 V370 L124.0 380.6 H131.6 L129.2 370 V366Z" fill="#f4f8fa" stroke="#c8d0d6" stroke-width="0.5"/>
<ellipse cx="127.8" cy="376" rx="2" ry="2.2" fill="#1f95e3"/>
<path d="M127.8 378 m-3.4 0 h6.8 l0.4 2.4 h-7.6z" fill="#63cdf0"/>
<path d="M106.8 361.6 L107.6 361.4 L109.6 366.6Z" stroke="#2a2780" stroke-width="0.8" fill="#2a2780"/>
<rect x="156.7" y="355.8" width="55.8" height="32.5" fill="#fff" stroke="#dfe5e8" stroke-width="0.8"/>
<rect x="157.1" y="356.2" width="16" height="31.7" fill="#b7e0da"/>
<circle cx="170" cy="371.7" r="7" fill="#8cc5c4"/><path d="M163.6 369 A7 7 0 0 1 176.6 369.4 C172 366.6 168 369.6 163.6 369Z" fill="#4f9cb4"/><path d="M164 375 C167 372 173 372 176.4 374.6 A7 7 0 0 1 164 375Z" fill="#d9ece6"/>
<path d="M181.6 362.6 H204.6" stroke="#666" stroke-width="1.1" stroke-dasharray="1.6 0.5"/>
<path d="M181.6 370 H207 M181.6 371.6 H200.6 M181.6 375.4 H207 M181.6 377 H205 M181.6 378.6 H185" stroke="#b5b5b5" stroke-width="0.6"/>
<rect x="81.7" y="391.3" width="55.5" height="33" fill="#c8dbe2"/>
<rect x="88.7" y="398.8" width="41.6" height="18.4" fill="#fafcfd"/>
<path d="M97.6 407.8 H121.4" stroke="#777" stroke-width="1.1" stroke-dasharray="1.6 0.5"/>
<path d="M118.6 413 h3.4 v4.6 h-3.4z" fill="#b9c7cd" opacity="0.8"/>
<rect x="156.7" y="391.3" width="55.8" height="33" fill="#fff" stroke="#dfe5e8" stroke-width="0.8"/>
<path d="M163 396.2 H203.2" stroke="#777" stroke-width="1.1" stroke-dasharray="1.6 0.5"/>
<path d="M164.2 403.6 H195" stroke="#b5d8e6" stroke-width="1.5"/><path d="M164.2 403.6 H180.8" stroke="#6f9fc4" stroke-width="1.5"/>
<path d="M164.2 407.7 H195.2" stroke="#b5d8e6" stroke-width="1.5"/><path d="M164.2 407.7 H195.2" stroke="#6f9fc4" stroke-width="1.5"/>
<path d="M164.2 411.9 H188" stroke="#b5d8e6" stroke-width="1.5"/><path d="M164.2 411.9 H177" stroke="#6f9fc4" stroke-width="1.5"/>
<path d="M164.2 416.3 H198.4" stroke="#b5d8e6" stroke-width="1.5"/><path d="M164.2 416.3 H184" stroke="#6f9fc4" stroke-width="1.5"/>
<path d="M181.6 420 h1.4 m2 0 h1.4 m2 0 h1.4" stroke="#c9c9c9" stroke-width="0.7"/>
<rect x="35.5" y="470.5" width="223.2" height="126.2" fill="#fff" stroke="#c2c2c2" stroke-width="1"/>
<rect x="193" y="471" width="65.2" height="125.2" fill="#c8dbe2"/>
<rect x="120" y="483" width="127" height="100" fill="#fff"/>
<path d="M48 482.5 V514.5" stroke="#b4d8e8" stroke-width="1.3" stroke-dasharray="1.2 0.7" opacity="0.6"/>
<path d="M48.4 520.8 V577.5" stroke="#6aa7cc" stroke-width="0.9"/>
<circle cx="48.2" cy="583.0" r="0.7" fill="#6aa7cc"/>
<path d="M60.3 508.3 H68" stroke="#8fc4dc" stroke-width="1"/>
<defs><linearGradient id="fl" x1="0" x2="1"><stop offset="0" stop-color="#d9e1e6"/><stop offset="0.25" stop-color="#f8fbfc"/><stop offset="0.75" stop-color="#f3f7f9"/><stop offset="1" stop-color="#d3dce2"/></linearGradient><linearGradient id="fr" x1="0" y1="0" x2="0" y2="1"><stop offset="0" stop-color="#e3e9ed"/><stop offset="1" stop-color="#fff"/></linearGradient></defs>
<path d="M142.0 512 V529 L133.5 560.5 C132.1 564.5 133.9 566.5 136.9 566.5 H160.1 C163.1 566.5 164.9 564.5 163.5 560.5 L155.0 529 V512Z" fill="url(#fl)" stroke="#c4cdd3" stroke-width="0.6"/>
<ellipse cx="148.5" cy="512.4" rx="6.9" ry="1.3" fill="#fbfdfe" stroke="#c4cdd3" stroke-width="0.6"/>
<path d="M133.9 568.1 H163.1 V572.5 C163.1 574.5 133.9 574.5 133.9 572.5Z" fill="url(#fr)" opacity="0.9"/>
<path d="M143 545 C143.4 541.4 147.4 541.8 148.4 540.4 C150.6 538.6 153.6 541 152.8 544 C154.4 546.6 151 549.2 148.6 548.6 C146.4 551 142.6 548.4 143 545Z" fill="#2f9fe4"/><circle cx="151.4" cy="527" r="0.8" fill="#27207f"/><circle cx="150.8" cy="519" r="0.6" fill="#27207f"/>
<path d="M178.7 512 V529 L170.2 560.5 C168.79999999999998 564.5 170.6 566.5 173.6 566.5 H196.79999999999998 C199.79999999999998 566.5 201.6 564.5 200.2 560.5 L191.7 529 V512Z" fill="url(#fl)" stroke="#c4cdd3" stroke-width="0.6"/>
<path d="M177.89999999999998 527.5 L170.4 560.5 C169.0 564.5 170.6 566.1 173.6 566.1 H196.79999999999998 C199.79999999999998 566.1 201.39999999999998 564.5 199.99999999999997 560.5 L192.5 527.5Z" fill="#d7eef8" opacity="0.55"/>
<ellipse cx="185.2" cy="512.4" rx="6.9" ry="1.3" fill="#fbfdfe" stroke="#c4cdd3" stroke-width="0.6"/>
<path d="M170.6 568.1 H199.79999999999998 V572.5 C199.79999999999998 574.5 170.6 574.5 170.6 572.5Z" fill="url(#fr)" opacity="0.9"/>
<path d="M177 542 C177 536.4 184 537.4 186.6 535.8 C190.6 534.6 192 539.2 191.2 541.6 C196 544 193.4 549.6 189.4 548.6 C186.8 552.8 181.6 551.4 181 548 C177.6 547.8 176.4 544.4 177 542Z" fill="#2b9be3"/>
<path d="M216.9 512 V529 L208.4 560.5 C207.0 564.5 208.8 566.5 211.8 566.5 H235.0 C238.0 566.5 239.8 564.5 238.4 560.5 L229.9 529 V512Z" fill="url(#fl)" stroke="#c4cdd3" stroke-width="0.6"/>
<path d="M216.1 527.5 L208.60000000000002 560.5 C207.20000000000002 564.5 208.8 566.1 211.8 566.1 H235.0 C238.0 566.1 239.6 564.5 238.2 560.5 L230.70000000000002 527.5Z" fill="#8fdcf5" opacity="0.55"/>
<path d="M208.20000000000002 560.9 C207.20000000000002 564.5 208.8 566.3 211.8 566.3 H235.0 C238.0 566.3 239.6 564.5 238.6 560.9 C229.4 563.1 217.4 563.1 208.20000000000002 560.9Z" fill="#35c0ee" opacity="0.9"/>
<ellipse cx="223.4" cy="512.4" rx="6.9" ry="1.3" fill="#fbfdfe" stroke="#c4cdd3" stroke-width="0.6"/>
<path d="M208.8 568.1 H238.0 V572.5 C238.0 574.5 208.8 574.5 208.8 572.5Z" fill="url(#fr)" opacity="0.9"/>
<path d="M217 545 C215.6 540 220.4 538 221.6 535.6 C224.6 533.4 228.4 536.8 226.8 540.4 C231.6 543.8 230 549.8 228.6 552.4 C230.4 557.6 225.4 560.4 221.4 558.4 C217.4 558.8 215.8 554.4 218 551.6 C215.6 549.8 215.8 547 217 545Z" fill="#1f93e3"/>
<path d="M138 493 H142 L151 511.6 L150 512.4Z" fill="#231d7d"/>
<rect x="35.5" y="617.5" width="223.2" height="126.2" fill="#fff" stroke="#c2c2c2" stroke-width="1"/>
<rect x="36" y="618" width="64.8" height="125.2" fill="#b7e0da"/>
<path d="M48 629.5 V661.5" stroke="#ffffff" stroke-width="1.3" stroke-dasharray="1.2 0.7" opacity="0.6"/>
<path d="M48.4 667.8 V724.5" stroke="#ffffff" stroke-width="0.9"/>
<circle cx="48.2" cy="730.0" r="0.7" fill="#ffffff"/>
<defs><linearGradient id="ci" x1="0.2" y1="0" x2="0.6" y2="1"><stop offset="0" stop-color="#2d8fb3"/><stop offset="0.3" stop-color="#7db9c9"/><stop offset="0.55" stop-color="#cfe6e2"/><stop offset="1" stop-color="#e9f5ee"/></linearGradient><clipPath id="cc"><circle cx="88.7" cy="680.3" r="29.2"/></clipPath></defs>
<circle cx="88.7" cy="680.3" r="29.2" fill="url(#ci)"/>
<g clip-path="url(#cc)"><path d="M60 676 C70 662 84 664 96 668 L118 652 L120 700Z" fill="#e8f1ee" opacity="0.6"/><path d="M100 652 C110 654 116 660 118 668 L106 676 C104 668 100 660 96 656Z" fill="#1f86ae" opacity="0.85"/><ellipse cx="91" cy="680" rx="12.6" ry="5" fill="#eaf6f0" stroke="#8fc7b9" stroke-width="1.4"/><path d="M79 682 V688 C79 692 103 692 103 688 V682" fill="none" stroke="#9fd0c2" stroke-width="1.6"/><path d="M78 690 C74 700 76 712 80 716 H102 C106 712 108 700 104 690Z" fill="#cfeadd" opacity="0.9"/><path d="M75 654 L93 676" stroke="#5d9fb3" stroke-width="1.6"/><path d="M75 654 L93 676" stroke="#dff0f0" stroke-width="0.6"/><ellipse cx="116" cy="676" rx="8" ry="3.4" fill="#d9ede6" stroke="#9fd0c2" stroke-width="1"/><path d="M108 678 V690 H124 V678" fill="#cfe8df" opacity="0.8"/><ellipse cx="64" cy="688" rx="9" ry="4" fill="#e3f0ec" stroke="#8cb8b0" stroke-width="0.9"/><path d="M56 690 C56 700 62 706 72 708 V690Z" fill="#dcebe8" opacity="0.8"/></g>
<path d="M135.3 655.3 H143" stroke="#8fc4dc" stroke-width="1"/>
</svg>
<div class="a" style="left:35px;top:764px;width:224px;height:80px;background:#c8dbe2;border:1px solid #bcc6ca;border-bottom:none"></div>
<div class="a" style="left:64.2px;top:792px;width:165.8px;height:50px;background:#fff;overflow:hidden">
<svg style="left:0;top:0" width="166" height="50" viewBox="0 0 166 50"><g fill="none" stroke="#f3f6f9" stroke-width="2" stroke-linecap="round">
<path d="M56.0 0.5 L66.8 2.0"/>
<path d="M55.5 1.5 L65.1 6.4"/>
<path d="M54.6 2.3 L61.7 9.9"/>
<path d="M53.4 2.8 L57.2 12.2"/>
<path d="M52.0 3.0 L52.0 13.0"/>
<path d="M50.6 2.8 L46.8 12.2"/>
<path d="M49.4 2.3 L42.3 9.9"/>
<path d="M48.5 1.5 L38.9 6.4"/>
<path d="M48.0 0.5 L37.2 2.0"/>
<path d="M84.0 2.5 L94.8 4.0"/>
<path d="M83.5 3.5 L93.1 8.4"/>
<path d="M82.6 4.3 L89.7 11.9"/>
<path d="M81.4 4.8 L85.2 14.2"/>
<path d="M80.0 5.0 L80.0 15.0"/>
<path d="M78.6 4.8 L74.8 14.2"/>
<path d="M77.4 4.3 L70.3 11.9"/>
<path d="M76.5 3.5 L66.9 8.4"/>
<path d="M76.0 2.5 L65.2 4.0"/>
<path d="M108.0 6.5 L118.8 8.0"/>
<path d="M107.5 7.5 L117.1 12.4"/>
<path d="M106.6 8.3 L113.7 15.9"/>
<path d="M105.4 8.8 L109.2 18.2"/>
<path d="M104.0 9.0 L104.0 19.0"/>
<path d="M102.6 8.8 L98.8 18.2"/>
<path d="M101.4 8.3 L94.3 15.9"/>
<path d="M100.5 7.5 L90.9 12.4"/>
<path d="M100.0 6.5 L89.2 8.0"/>
<path d="M144.0 8.5 L154.8 10.0"/>
<path d="M143.5 9.5 L153.1 14.4"/>
<path d="M142.6 10.3 L149.7 17.9"/>
<path d="M141.4 10.8 L145.2 20.2"/>
<path d="M140.0 11.0 L140.0 21.0"/>
<path d="M138.6 10.8 L134.8 20.2"/>
<path d="M137.4 10.3 L130.3 17.9"/>
<path d="M136.5 9.5 L126.9 14.4"/>
<path d="M136.0 8.5 L125.2 10.0"/>
<path d="M132.0 30.5 L142.8 32.0"/>
<path d="M131.5 31.5 L141.1 36.4"/>
<path d="M130.6 32.3 L137.7 39.9"/>
<path d="M129.4 32.8 L133.2 42.2"/>
<path d="M128.0 33.0 L128.0 43.0"/>
<path d="M126.6 32.8 L122.8 42.2"/>
<path d="M125.4 32.3 L118.3 39.9"/>
<path d="M124.5 31.5 L114.9 36.4"/>
<path d="M124.0 30.5 L113.2 32.0"/>
<path d="M154.0 40.5 L164.8 42.0"/>
<path d="M153.5 41.5 L163.1 46.4"/>
<path d="M152.6 42.3 L159.7 49.9"/>
<path d="M151.4 42.8 L155.2 52.2"/>
<path d="M150.0 43.0 L150.0 53.0"/>
<path d="M148.6 42.8 L144.8 52.2"/>
<path d="M147.4 42.3 L140.3 49.9"/>
<path d="M146.5 41.5 L136.9 46.4"/>
<path d="M146.0 40.5 L135.2 42.0"/>
</g></svg></div>
<!-- title bar icons -->
<svg style="left:0;top:0" width="1440" height="64" viewBox="0 0 1440 64" fill="none" stroke="#fff" stroke-width="1.5">
 <!-- save/sync -->
 <path d="M35 17 V11 H22.8 V23 H27.5 M22.8 17.5 H27"/>
 <path d="M28.5 20.5 A4.2 4.2 0 0 1 36 17.6 M36.4 19.5 A4.2 4.2 0 0 1 28.9 22.4" stroke-width="1.4"/>
 <path d="M36.6 15.2 V18.2 H33.6 M28.3 24.8 V21.8 H31.3" stroke-width="1.2"/>
 <!-- undo -->
 <path d="M52.5 14.8 H60 A4.4 4.4 0 0 1 60 23.4 H58.5" stroke-width="2"/>
 <path d="M56.5 10.8 L52.3 14.8 L56.5 18.8" stroke-width="2"/>
 <path d="M72.3 15.3 L75 18 L77.7 15.3" stroke-width="1.2"/>
 <!-- redo (dim) -->
 <g stroke="#dc7a5c"><path d="M95.4 11.1 A5.6 5.6 0 1 0 101.4 13.8" stroke-width="1.7"/><path d="M97.6 10.2 H102.9 V15.4 L100.6 12.6Z" fill="#dc7a5c" stroke="none"/></g>
 <!-- present -->
 <path d="M118.3 10.6 H134" stroke-width="1.6"/>
 <path d="M120.5 11 V20.6 H126 M124.6 20.8 V23.2 M121 24.3 H131 M124.4 23.4 L126.8 21.5" stroke-width="1.2"/>
 <circle cx="129.6" cy="17.4" r="4.4" stroke-width="1.2" fill="#b7472a"/>
 <path d="M128.2 15.2 L132 17.4 L128.2 19.6Z" fill="#fff" stroke="none"/>
 <!-- customize -->
 <path d="M151.8 14.6 H157.4" stroke-width="1.3"/>
 <path d="M151.6 17 H157.6 L154.6 20.4Z" fill="#fff" stroke="none"/>
 <!-- lightbulb -->
 <path d="M816.5 53 C816.5 50.6 813.7 49.8 813.7 46.9 A5.6 5.6 0 0 1 824.9 46.9 C824.9 49.8 822.1 50.6 822.1 53 Z M816.9 54.9 H821.7 M817.7 56.6 H820.9" stroke-width="1.2"/>
 <!-- ribbon display options -->
 <path d="M1272.5 10.5 H1284.5 V19.5 H1272.5Z M1272.5 12.5 H1284.5" stroke-width="1"/>
 <path d="M1278.5 18 V14.8 M1276.6 16.4 L1278.5 14.5 L1280.4 16.4" stroke-width="1"/>
 <!-- window controls -->
 <path d="M1320.5 14.5 H1330.5" stroke-width="1.1"/>
 <path d="M1366.5 12.5 H1374.5 V20.5 H1366.5Z M1368.5 12.5 V10.5 H1376.5 V18.5 H1374.5" stroke-width="1.1"/>
 <path d="M1412.3 9.8 L1422.3 19.8 M1422.3 9.8 L1412.3 19.8" stroke-width="1.2"/>
 <!-- comment -->
 <path d="M1409.5 41.5 H1424.5 V51.5 H1415.5 L1412.5 54.8 V51.5 H1409.5Z" stroke-width="1.2"/>
</svg>
<!-- avatar -->
<svg style="left:1220px;top:2.8px" width="24" height="24" viewBox="0 0 24 24">
 <defs><clipPath id="av"><circle cx="12" cy="12" r="12"/></clipPath>
 <radialGradient id="avb" cx="50%" cy="40%" r="60%"><stop offset="0" stop-color="#f3e2b4"/><stop offset="1" stop-color="#d9b878"/></radialGradient></defs>
 <g clip-path="url(#av)">
  <rect width="24" height="24" fill="url(#avb)"/>
  <path d="M4.6 24 C3.6 16 4 7 8 3.6 C11 1.4 15.4 1.8 17.6 5 C20 9 20.6 15 21.6 19 C22 21 21 24 21 24Z" fill="#231a17"/>
  <path d="M14 20 C17 19 20 20 22 23 L22 24 H13Z" fill="#5f8fbb"/>
  <ellipse cx="11.8" cy="12" rx="5.3" ry="7" fill="#d8a285"/>
  <path d="M6.6 9 C8 5.4 13 4.4 16.4 7.4 C14 6.8 10 6.6 6.6 9Z" fill="#231a17"/>
  <path d="M9.2 15 C10.6 16.8 13.4 16.8 14.8 14.8 C13.2 15.4 10.8 15.5 9.2 15Z" fill="#f7eee8"/>
  <path d="M8.6 10.2 H10.6 M13 10.2 H15" stroke="#3a2620" stroke-width="0.8"/>
 </g>
</svg>
<!-- ribbon icons -->
<svg style="left:0;top:0;will-change:transform" width="1440" height="160" viewBox="0 0 1440 160" fill="none">
 <defs>
  <path id="car" d="M-2.4 -1.2 L0 1.2 L2.4 -1.2" stroke-width="1.1" fill="none"/>
  <g id="lau" stroke-width="1" fill="none"><path d="M0.5 6 V0.5 H6"/><path d="M2.5 2.5 L6.5 6.5 M3.6 6.8 H6.8 V3.6"/></g>
 </defs>
 <!-- paste -->
 <rect x="17.2" y="75.3" width="23.6" height="24.5" rx="1" fill="#eabf6e"/>
 <path d="M22 78.9 V75.6 H26.4 V72.6 H31.8 V75.6 H35.6 V78.9Z" fill="#7b7b7b"/>
 <rect x="28.1" y="73.9" width="2" height="1.6" fill="#f3f3f3"/>
 <path d="M32 83.9 H40.6 L44.6 87.9 V101 H32Z" fill="#fff" stroke="#8c8c8c" stroke-width="1"/>
 <path d="M40.6 83.9 V87.9 H44.6" stroke="#8c8c8c" stroke-width="1"/>
 <use href="#car" x="29" y="128.2" stroke="#555"/>
 <!-- cut -->
 <path d="M57.2 71 L63.6 80.6 M64.8 71 L58.4 80.6" stroke="#6f6f6f" stroke-width="1.5"/>
 <circle cx="57.2" cy="82.1" r="2.4" stroke="#3d7dc2" stroke-width="1.2"/>
 <circle cx="64.8" cy="82.1" r="2.4" stroke="#3d7dc2" stroke-width="1.2"/>
 <!-- copy -->
 <path d="M53.7 94.7 H59.8 L62.3 97.2 V104.6 H53.7Z" fill="#fff" stroke="#7a7a7a"/>
 <path d="M55.4 98 H58.2 M55.4 100 H58.2 M55.4 102 H58.2" stroke="#3d7dc2" stroke-width="0.9"/>
 <path d="M59.3 97.7 H65 L67.6 100.3 V107.4 H59.3Z" fill="#fff" stroke="#7a7a7a"/>
 <path d="M65 97.7 V100.3 H67.6" stroke="#7a7a7a" stroke-width="0.8"/>
 <path d="M61 101.6 H65.8 M61 103.4 H65.8 M61 105.2 H65.8" stroke="#3d7dc2" stroke-width="0.9"/>
 <use href="#car" x="114" y="101" stroke="#555"/>
 <!-- format painter -->
 <path d="M53.6 124.4 L61 121.6 L64.6 125.6 L59.4 130.6Z" fill="#eabf6e"/>
 <path d="M61.2 120.8 L66.6 117 L69 120.2 L64.6 125.4Z" fill="#7b7b7b"/>
 <path d="M60 121.2 L65.6 126.2" stroke="#f3f3f3" stroke-width="1"/>
 <use href="#lau" x="153.5" y="144.6" stroke="#777"/>
 <!-- new slide -->
 <rect x="169.5" y="68.5" width="47" height="69" fill="none" stroke="#c9505a" stroke-width="1"/>
 <rect x="180.9" y="74.6" width="26.8" height="21.8" rx="1.6" fill="#fdfdfd" stroke="#8a8a8a" stroke-width="1"/>
 <rect x="184.6" y="78" width="19.5" height="5.6" fill="#c9c9c9"/>
 <path d="M186.6 88.4 H204 M186.6 91.5 H204" stroke="#b5b5b5" stroke-width="0.9"/>
 <path d="M184.3 88.4 H185.6 M184.3 91.5 H185.6" stroke="#b5b5b5" stroke-width="0.9"/>
 <g stroke="#e9b95c" stroke-width="1.3"><path d="M184 70.2 V82.2 M178 76.2 H190 M179.8 72 L188.2 80.4 M188.2 72 L179.8 80.4"/></g>
 <circle cx="184" cy="76.2" r="2.5" fill="#f7e6c0" stroke="#e9b95c" stroke-width="1"/>
 <use href="#car" x="208.3" y="128.3" stroke="#555"/>
 <!-- layout -->
 <rect x="218.9" y="71.7" width="14.6" height="12.6" rx="1" fill="#fdfdfd" stroke="#7f7f7f"/>
 <rect x="220.6" y="73.4" width="11.2" height="1.6" fill="#cfcfcf"/>
 <rect x="220.6" y="76.3" width="4.6" height="6.2" fill="#c9c9c9"/>
 <path d="M226.6 77.2 H231.6 M226.6 79.4 H231.6 M226.6 81.6 H231.6" stroke="#9a9a9a" stroke-width="0.9"/>
 <use href="#car" x="280.1" y="78.2" stroke="#555"/>
 <!-- reset -->
 <rect x="220" y="96.6" width="13.5" height="10.8" rx="1" fill="#fdfdfd" stroke="#7f7f7f"/>
 <rect x="221.8" y="100.6" width="4.4" height="5" fill="#c9c9c9"/>
 <path d="M227.6 99.4 H231.8 M227.6 101.8 H231.8 M227.6 104.2 H231.8" stroke="#9a9a9a" stroke-width="0.9"/>
 <path d="M219.6 99.4 C220.2 95.6 225.4 94 228.6 97.4" stroke="#f3f3f3" stroke-width="3.6"/>
 <path d="M219.8 99.2 C220.6 95.8 225.4 94.4 228.4 97.4" stroke="#3d7dc2" stroke-width="1.7"/>
 <path d="M218.2 96.2 V100.6 H222.6Z" fill="#3d7dc2"/>
 <!-- section -->
 <g stroke="#e9b95c" stroke-width="0.9"><path d="M221.4 116.4 V122.8 M218.2 119.6 H224.6 M219.2 117.4 L223.6 121.8 M223.6 117.4 L219.2 121.8"/></g>
 <circle cx="221.4" cy="119.6" r="1.3" fill="#f7e6c0"/>
 <path d="M226 119.3 H233.2 V122.3 H226" stroke="#e38d3d" stroke-width="1.1"/>
 <rect x="224.9" y="124.5" width="8.6" height="6.8" rx="0.8" fill="#fdfdfd" stroke="#7f7f7f"/>
 <path d="M226.6 127 H231.8" stroke="#bdbdbd" stroke-width="1.4"/>
 <use href="#car" x="283.1" y="124.4" stroke="#555"/>
 <!-- font group -->
 <rect x="310.5" y="75.7" width="151" height="21.8" fill="#e8e8e8" stroke="#c9c9c9"/>
 <path d="M448.5 76 V97.4" stroke="#c9c9c9"/>
 <path d="M451.7 84.8 H457.7 L454.7 88Z" fill="#b4b4b4"/>
 <rect x="464.5" y="75.7" width="45" height="21.8" fill="#e8e8e8" stroke="#c9c9c9"/>
 <path d="M496.5 76 V97.4" stroke="#c9c9c9"/>
 <path d="M499.4 84.8 H505.4 L502.4 88Z" fill="#b4b4b4"/>
 <path d="M525.8 81.6 H531.4 L528.6 78.8Z M549.6 78.9 H555.2 L552.4 81.7Z" fill="#a8a8a8"/>
 <path d="M562.5 76 V97 M508.5 107 V127.6" stroke="#c9c9c9"/>
 <!-- clear formatting -->
 <path d="M572 87.4 L574.8 79.4 L577.8 87.4 M573 84.8 H576.8" stroke="#a8a8a8" stroke-width="1.1"/>
 <path d="M577.6 88.6 L582.6 83.4 L585.8 86.4 L580.8 91.6Z" fill="#c4c4c4"/>
 <path d="M574.4 89.6 L576.6 87.6 L579.8 91 L577.4 92.8Z" fill="#d2d2d2"/>
 <!-- AV arrow -->
 <path d="M434 121.3 H448 M436.4 119 L433.8 121.3 L436.4 123.6 M445.6 119 L448.2 121.3 L445.6 123.6" stroke="#a8a8a8" stroke-width="1"/>
 <use href="#car" x="457.2" y="117.3" stroke="#b0b0b0"/>
 <use href="#car" x="495" y="117.3" stroke="#b0b0b0"/>
 <!-- highlighter -->
 <path d="M521 119.6 L530.6 111.4" stroke="#b2b2b2" stroke-width="2.4"/>
 <rect x="516" y="121.3" width="16" height="3.4" fill="#dcdcdc"/>
 <use href="#car" x="542" y="117.3" stroke="#b0b0b0"/>
 <use href="#car" x="581.1" y="117.3" stroke="#b0b0b0"/>
 <use href="#lau" x="585.5" y="144.6" stroke="#b0b0b0"/>
 <!-- paragraph group -->
 <rect x="605.5" y="75.7" width="36.2" height="21.8" fill="#c6c6c6" stroke="#8e8e8e" stroke-width="1.2"/>
 <path d="M613.8 79.5 H622 M613.8 85.5 H622 M613.8 91.4 H622 " stroke="#b2b2b2" stroke-width="1"/>
 <circle cx="610.6" cy="79.5" r="1.1" fill="#b2b2b2"/><circle cx="610.6" cy="85.5" r="1.1" fill="#b2b2b2"/><circle cx="610.6" cy="91.4" r="1.1" fill="#b2b2b2"/>
 <path d="M631.2 84.8 L633.9 87.5 L636.6 84.8" stroke="#2b2b2b" stroke-width="1.3"/>
 <path d="M653.4 79.5 H662 M653.4 85.5 H662 M653.4 91.4 H662 " stroke="#b0b0b0" stroke-width="1"/>
 <g fill="#b0b0b0" font-family="Liberation Sans, sans-serif" font-size="5.5" font-weight="700"><text x="648.2" y="81.5">1</text><text x="648.2" y="87.5">2</text><text x="648.2" y="93.4">3</text></g>
 <use href="#car" x="673.2" y="86.4" stroke="#b0b0b0"/>
 <path d="M685.5 76.3 V96.6 M740.5 76.3 V96.6 M703.5 107.2 V127.7" stroke="#c9c9c9"/>
 <path d="M693 79.3 H708.8 M701.2 82.4 H708.8 M701.2 85.4 H708.8 M701.2 88.4 H708.8 M693 91.5 H708.8 " stroke="#b0b0b0" stroke-width="1"/>
 <path d="M693.6 85.4 H699.6 M696.4 82.8 L693.6 85.4 L696.4 88" stroke="#b0b0b0" stroke-width="1.3"/>
 <path d="M717 79.3 H732.8 M725.2 82.4 H732.8 M725.2 85.4 H732.8 M725.2 88.4 H732.8 M717 91.5 H732.8 " stroke="#b0b0b0" stroke-width="1"/>
 <path d="M717.4 85.4 H723.4 M720.6 82.8 L723.4 85.4 L720.6 88" stroke="#b0b0b0" stroke-width="1.3"/>
 <path d="M751.3 79 V93.4 M749 81.2 L751.3 78.8 L753.6 81.2 M749 91.2 L751.3 93.6 L753.6 91.2" stroke="#b0b0b0" stroke-width="1"/>
 <path d="M755.4 81.6 H763 M755.4 84.5 H763 M755.4 87.5 H763 M755.4 90.4 H763 " stroke="#b0b0b0" stroke-width="1"/>
 <use href="#car" x="771.9" y="86.4" stroke="#b0b0b0"/>
 <path d="M609 112.4 H622.8 M609 115.4 H618.8 M609 118.4 H622.8 M609 121.4 H618.8 M633 112.4 H646.8 M635 115.4 H644.8 M633 118.4 H646.8 M635 121.4 H644.8 M657 112.4 H671 M661 115.4 H671 M657 118.4 H671 M661 121.4 H671 M681 112.4 H695 M681 115.4 H695 M681 118.4 H695 M681 121.4 H695 M712.2 112.4 H717.4 M712.2 115.4 H717.4 M712.2 118.4 H717.4 M712.2 121.4 H717.4 M719.8 112.4 H725 M719.8 115.4 H725 M719.8 118.4 H725 M719.8 121.4 H725 " stroke="#b0b0b0" stroke-width="1"/>
 <use href="#car" x="735" y="117.4" stroke="#b0b0b0"/>
 <path d="M785.4 71 V85.4 M789.6 71 V85.4 M793.7 80 V85.4 M797.8 80 V85.4" stroke="#b0b0b0" stroke-width="1"/>
 <path d="M783.9 83.8 L785.4 85.6 L786.9 83.8 M788.1 83.8 L789.6 85.6 L791.1 83.8 M792.2 83.8 L793.7 85.6 L795.2 83.8 M796.3 83.8 L797.8 85.6 L799.3 83.8" stroke="#b0b0b0" stroke-width="1"/>
 <path d="M792.5 77.6 L795.6 70.8 L798.7 77.6 M793.6 75.2 H797.6" stroke="#b0b0b0" stroke-width="1"/>
 <use href="#car" x="881.9" y="78" stroke="#b0b0b0"/>
 <path d="M787.4 94.8 H784.5 V107.4 H787.4 M796.6 94.8 H799.5 V107.4 H796.6" stroke="#b0b0b0" stroke-width="1"/>
 <path d="M792 94 V98.2 M790.2 95.8 L792 94 L793.8 95.8 M792 104 V108.2 M790.2 106.4 L792 108.2 L793.8 106.4" stroke="#b0b0b0" stroke-width="1"/>
 <path d="M787.4 99.8 H796.6 M787.4 102.4 H796.6" stroke="#cfcfcf" stroke-width="1"/>
 <use href="#car" x="862" y="101.2" stroke="#b0b0b0"/>
 <path d="M784 116.2 H795 L798.6 120.4 H788 L786.6 125.6 H784 L786.2 120.6Z" fill="#b8b8b8"/>
 <rect x="789.5" y="122" width="10" height="9" fill="#f6f6f6" stroke="#b0b0b0"/>
 <path d="M791.6 125 H792.8 M794.2 125 H797.6 M791.6 128 H792.8 M794.2 128 H797.6" stroke="#c4c4c4" stroke-width="1"/>
 <use href="#car" x="916.3" y="124.2" stroke="#b0b0b0"/>
 <use href="#lau" x="923.4" y="144.6" stroke="#b0b0b0"/>
 <!-- drawing group -->
 <rect x="944.5" y="70.5" width="137" height="61" fill="#fff" stroke="#c6c6c6"/>
 <rect x="1068" y="71" width="13" height="20.4" fill="#dadada"/>
 <path d="M1067.5 71 V131 M1067.5 91.5 H1081 M1067.5 110.5 H1081" stroke="#c6c6c6"/>
 <path d="M1071.6 82 H1077 L1074.3 79Z" fill="#c2c2c2"/>
 <path d="M1071.4 100.2 H1077.2 L1074.3 103.4Z M1071.4 121.2 H1077.2 L1074.3 124.4Z" fill="#666"/>
 <path d="M1071.2 118 H1077.4" stroke="#666" stroke-width="1.1"/>
 <g stroke="#5a5a5a" stroke-width="1" fill="none">
 <rect x="948.6" y="74.7" width="13.8" height="11.8" stroke-width="1.1"/>
 <path d="M969.2 74 L982.8 87.6"/>
 <path d="M989.2 74 L1002.6 87.2 M998.8 87.4 H1002.8 V83.4"/>
 <rect x="1008.5" y="75.6" width="15" height="11"/>
 <ellipse cx="1035.5" cy="81.1" rx="7.2" ry="5.6"/>
 <rect x="1048.5" y="75.6" width="15" height="11" rx="2.6"/>
 <path d="M956.6 94.8 L950.4 107.3 H962.8Z"/>
 <path d="M968.2 95.5 H975.5 V106.5 H984"/>
 <path d="M988.2 94.5 H995.5 V105.5 H1003.4 M1001 103 L1003.6 105.5 L1001 108"/>
 <path d="M1008.5 97.8 H1015.5 V93.6 L1022.6 100.5 L1015.5 107.4 V103.4 H1008.5Z"/>
 <path d="M1032.4 93.5 H1038.6 V100.6 H1042.6 L1035.5 107.6 L1028.4 100.6 H1032.4Z"/>
 <path d="M1049.5 98.4 C1049.5 96 1051.2 95.3 1053 95.3 H1061.2 C1059.4 97.4 1059.8 99.6 1062.5 100.2 V105 C1062.5 106 1062 106.5 1061 106.5 H1049.5Z"/>
 <path d="M953.6 113.6 C950.6 115.6 951 117.8 953.2 118 C956.4 118.2 958.2 116.4 958.8 118.4 C959.4 120.6 955.4 121.4 956.2 123.6 C956.8 125.2 959 124.6 958.8 123 C958.6 121.8 956.8 122.2 957.2 123.6 L958.2 127"/>
 <path d="M969.2 115.8 C977 115 983 119.4 983.8 126.8"/>
 <path d="M988.3 122 C990.4 117 992.6 115.4 994.4 115.4 C998.6 115.4 998.4 126.6 1003.6 126.4"/>
 <path d="M1017.2 115.5 C1015 115.5 1015.4 117.6 1015.4 118.8 C1015.4 120 1014.8 120.6 1013.6 120.6 C1014.8 120.6 1015.4 121.2 1015.4 122.4 C1015.4 123.6 1015 125.8 1017.2 125.8"/>
 <path d="M1034.6 115.5 C1036.8 115.5 1036.4 117.6 1036.4 118.8 C1036.4 120 1037 120.6 1038.2 120.6 C1037 120.6 1036.4 121.2 1036.4 122.4 C1036.4 123.6 1036.8 125.8 1034.6 125.8"/>
 <path d="M1055.5 114 L1057.3 119.3 L1062.8 119.4 L1058.4 122.8 L1060 128.1 L1055.5 124.9 L1051 128.1 L1052.6 122.8 L1048.2 119.4 L1053.7 119.3Z"/>
 </g>
 <path d="M950.4 81.8 L952.6 77.2 L954.8 81.8 M951.2 80.2 H954" stroke="#3d6fb6" stroke-width="1.2" fill="none"/>
 <path d="M956.4 78.4 H960.6 M956.4 80.8 H960.6 M950.4 84 H960.6" stroke="#9a9a9a" stroke-width="0.9"/>
 <rect x="1107.5" y="76" width="9.6" height="9.6" fill="#eabf6e"/><rect x="1098" y="85.1" width="10.3" height="9.6" fill="#eabf6e"/>
 <rect x="1094.7" y="72.9" width="10.6" height="10.4" fill="#fff" stroke="#6a6a6a"/><rect x="1109.5" y="87.9" width="10.8" height="10.2" fill="#fff" stroke="#6a6a6a"/>
 <use href="#car" x="1108" y="128.4" stroke="#444"/>
 <rect x="1142.8" y="73.7" width="25.2" height="24.8" rx="5.5" fill="#eee9ef" stroke="#c6c6c6"/>
 <path d="M1171.4 80.4 L1171.6 86 L1164 93.2 L1160.8 90.4Z" fill="#bdbdbd"/>
 <path d="M1159.8 91.4 L1163 94.2 C1160 99.4 1155 100.6 1149.6 101.4 C1154.4 98.6 1156.4 96 1159.8 91.4Z" fill="#bdbdbd"/>
 <path d="M1160 90.6 L1163.8 94" stroke="#f3f3f3" stroke-width="0.9"/>
 <use href="#car" x="1171.2" y="128.4" stroke="#b0b0b0"/>
 <path d="M1188 73.2 L1195 78.6 L1189.4 82 L1183.2 77.4Z" fill="#f8f8f8" stroke="#b0b0b0"/>
 <path d="M1187 74.4 V71.4 C1187 70 1189.6 70 1189.6 71.4 V75" stroke="#b0b0b0" fill="none"/>
 <path d="M1195 78.6 C1196.6 79.6 1196.8 81 1196.2 82" stroke="#b0b0b0" fill="none"/>
 <rect x="1181.2" y="82.6" width="15.8" height="3" fill="#dcdcdc"/>
 <use href="#car" x="1256.9" y="78.1" stroke="#b0b0b0"/>
 <path d="M1190 93.9 H1181.7 V103 H1186.4" stroke="#b0b0b0" fill="none"/>
 <path d="M1193.6 94.2 L1195.6 96.2 L1189.2 102 L1186.6 102.8 L1187.4 100.2Z" fill="#b0b0b0"/>
 <use href="#car" x="1281.4" y="101" stroke="#b0b0b0"/>
 <path d="M1185.2 118.4 H1193.6 C1194.6 118.4 1195 119 1194.6 120 L1192.4 126 C1192 127 1191.4 127.4 1190.4 127.4 H1183 C1182 127.4 1181.6 126.8 1182 125.8 L1184 119.6 C1184.2 118.8 1184.6 118.4 1185.2 118.4Z" fill="#f8f8f8" stroke="#c0c0c0"/>
 <path d="M1182.2 127 C1184 128.8 1190 128.8 1192 127.6 L1194.6 121" stroke="#c0c0c0" stroke-width="1.6" fill="none"/>
 <use href="#car" x="1277.4" y="124.3" stroke="#b0b0b0"/>
 <use href="#lau" x="1286.6" y="144.8" stroke="#b0b0b0"/>
  <!-- editing group -->
 <circle cx="1319.2" cy="76.6" r="3.3" stroke="#3d6fa6" stroke-width="1.5" fill="none"/>
 <path d="M1316.6 79 L1311 83.4" stroke="#3d6fa6" stroke-width="2" stroke-linecap="round"/>
 <path d="M1309.4 103.4 V105.4 H1312.6 M1311.2 104 L1312.8 105.4 L1311.2 106.8" stroke="#3d6fa6" stroke-width="0.9" fill="none"/>
 <path d="M1313.5 116.6 V128.2 L1316.4 125.6 L1318.4 130.2 L1320 129.5 L1318 125 H1321.6Z" fill="#fff" stroke="#555" stroke-width="0.9"/>
 <use href="#car" x="1383" y="101" stroke="#444"/>
 <use href="#car" x="1366" y="124.3" stroke="#444"/>
 <path d="M1418.2 150.6 L1424.7 144.4 L1431.2 150.6" stroke="#444" stroke-width="1.2" fill="none"/>
</svg><span class="t" style="left:561.5px;top:10px;font-size:12px;line-height:14.4px;color:#ffffff;letter-spacing:-0.116px;transform:translateY(0.90px);transform-origin:0 50%;">How To Change Slide Size In PowerPoint.pptx  -  PowerPoint</span>
<span class="t" style="left:1098.5px;top:9px;font-size:12px;line-height:14.4px;color:#ffffff;letter-spacing:-0.171px;transform:translateY(0.90px);transform-origin:0 50%;">Dina Jane Abay-abay</span>
<span class="t" style="left:19.5px;top:41px;font-size:12px;line-height:14.4px;color:#ffffff;letter-spacing:-0.115px;transform:translateY(0.90px);transform-origin:0 50%;">File</span>
<span class="t" style="left:73.0px;top:41px;font-size:12px;line-height:14.4px;color:#b7472a;letter-spacing:0.495px;transform:translateY(0.90px);transform-origin:0 50%;">Home</span>
<span class="t" style="left:130.0px;top:41px;font-size:12px;line-height:14.4px;color:#ffffff;letter-spacing:0.197px;transform:translateY(0.90px);transform-origin:0 50%;">Insert</span>
<span class="t" style="left:188.5px;top:41px;font-size:12px;line-height:14.4px;color:#ffffff;letter-spacing:-0.081px;transform:translateY(0.90px);transform-origin:0 50%;">New Tab</span>
<span class="t" style="left:260.5px;top:41px;font-size:12px;line-height:14.4px;color:#ffffff;letter-spacing:-0.272px;transform:translateY(0.90px);transform-origin:0 50%;">Design</span>
<span class="t" style="left:325.0px;top:41px;font-size:12px;line-height:14.4px;color:#ffffff;letter-spacing:-0.275px;transform:translateY(0.90px);transform-origin:0 50%;">Transitions</span>
<span class="t" style="left:406.5px;top:41px;font-size:12px;line-height:14.4px;color:#ffffff;letter-spacing:0.292px;transform:translateY(0.90px);transform-origin:0 50%;">Animations</span>
<span class="t" style="left:494.5px;top:41px;font-size:12px;line-height:14.4px;color:#ffffff;letter-spacing:-0.227px;transform:translateY(0.90px);transform-origin:0 50%;">Slide Show</span>
<span class="t" style="left:578.5px;top:41px;font-size:12px;line-height:14.4px;color:#ffffff;letter-spacing:-0.138px;transform:translateY(0.90px);transform-origin:0 50%;">Record</span>
<span class="t" style="left:642.5px;top:41px;font-size:12px;line-height:14.4px;color:#ffffff;letter-spacing:-0.272px;transform:translateY(0.90px);transform-origin:0 50%;">Review</span>
<span class="t" style="left:706.5px;top:41px;font-size:12px;line-height:14.4px;color:#ffffff;letter-spacing:0.068px;transform:translateY(0.90px);transform-origin:0 50%;">View</span>
<span class="t" style="left:758.5px;top:41px;font-size:12px;line-height:14.4px;color:#ffffff;letter-spacing:0.438px;transform:translateY(0.90px);transform-origin:0 50%;">Help</span>
<span class="t" style="left:838.5px;top:41px;font-size:12px;line-height:14.4px;color:#ffffff;letter-spacing:0.112px;transform:translateY(0.90px);transform-origin:0 50%;">Tell me what you want to do</span>
<span class="t" style="left:309.0px;top:752px;font-size:14.5px;line-height:17.4px;color:#555555;letter-spacing:0.131px;transform:translateY(0.90px);transform-origin:0 50%;">Click to add notes</span>
<span class="t" style="left:799.4px;top:660px;font-size:25.6px;line-height:30.7px;color:#222;letter-spacing:0.449px;transform:translateY(0.04px) scaleX(0.7);transform-origin:0 50%;">DJ ABAY-ABAY</span>
<span class="t" style="left:14.5px;top:106px;font-size:12px;line-height:14.4px;color:#333333;letter-spacing:-0.422px;transform:translateY(0.40px);transform-origin:0 50%;">Paste</span>
<span class="t" style="left:72.2px;top:72px;font-size:12px;line-height:14.4px;color:#333333;letter-spacing:0.306px;transform:translateY(0.40px);transform-origin:0 50%;">Cut</span>
<span class="t" style="left:72.2px;top:94px;font-size:12px;line-height:14.4px;color:#333333;letter-spacing:1.095px;transform:translateY(0.90px);transform-origin:0 50%;">Copy</span>
<span class="t" style="left:71.5px;top:118px;font-size:12px;line-height:14.4px;color:#333333;letter-spacing:-0.028px;transform:translateY(0.40px);transform-origin:0 50%;">Format Painter</span>
<span class="t" style="left:47.5px;top:141px;font-size:12px;line-height:14.4px;color:#2b2b2b;letter-spacing:0.078px;transform:translateY(0.40px);transform-origin:0 50%;">Clipboard</span>
<span class="t" style="left:181.5px;top:106px;font-size:12px;line-height:14.4px;color:#333333;letter-spacing:0.342px;transform:translateY(0.40px);transform-origin:0 50%;">New</span>
<span class="t" style="left:175.5px;top:121px;font-size:12px;line-height:14.4px;color:#333333;letter-spacing:-0.172px;transform:translateY(0.90px);transform-origin:0 50%;">Slide</span>
<span class="t" style="left:236.5px;top:72px;font-size:12px;line-height:14.4px;color:#333333;letter-spacing:0.194px;transform:translateY(0.40px);transform-origin:0 50%;">Layout</span>
<span class="t" style="left:236.5px;top:95px;font-size:12px;line-height:14.4px;color:#333333;letter-spacing:-0.590px;transform:translateY(0.20px);transform-origin:0 50%;">Reset</span>
<span class="t" style="left:236.5px;top:118px;font-size:12px;line-height:14.4px;color:#333333;letter-spacing:-0.005px;transform:translateY(0.40px);transform-origin:0 50%;">Section</span>
<span class="t" style="left:217.5px;top:141px;font-size:12px;line-height:14.4px;color:#2b2b2b;letter-spacing:-0.398px;transform:translateY(0.40px);transform-origin:0 50%;">Slides</span>
<span class="t" style="left:429.5px;top:141px;font-size:12px;line-height:14.4px;color:#2b2b2b;letter-spacing:-0.005px;transform:translateY(0.40px);transform-origin:0 50%;">Font</span>
<span class="t" style="left:731.0px;top:141px;font-size:12px;line-height:14.4px;color:#2b2b2b;letter-spacing:-0.356px;transform:translateY(0.40px);transform-origin:0 50%;">Paragraph</span>
<span class="t" style="left:1086.2px;top:141px;font-size:12px;line-height:14.4px;color:#2b2b2b;letter-spacing:-0.053px;transform:translateY(0.40px);transform-origin:0 50%;">Drawing</span>
<span class="t" style="left:1330.1px;top:141px;font-size:12px;line-height:14.4px;color:#2b2b2b;letter-spacing:0.016px;transform:translateY(0.40px);transform-origin:0 50%;">Editing</span>
<span class="t" style="left:467.1px;top:80px;font-size:12px;line-height:14.4px;color:#b0b0b0;letter-spacing:-1.259px;transform:translateY(0.40px);transform-origin:0 50%;">32</span>
<span class="t" style="left:803.0px;top:72px;font-size:12px;line-height:14.4px;color:#a6a6a6;letter-spacing:-0.046px;transform:translateY(0.40px);transform-origin:0 50%;">Text Direction</span>
<span class="t" style="left:803.0px;top:95px;font-size:12px;line-height:14.4px;color:#a6a6a6;letter-spacing:0.076px;transform:translateY(0.20px);transform-origin:0 50%;">Align Text</span>
<span class="t" style="left:803.0px;top:118px;font-size:12px;line-height:14.4px;color:#a6a6a6;letter-spacing:0.043px;transform:translateY(0.40px);transform-origin:0 50%;">Convert to SmartArt</span>
<span class="t" style="left:1086.7px;top:106px;font-size:12px;line-height:14.4px;color:#333333;letter-spacing:0.016px;transform:translateY(0.40px);transform-origin:0 50%;">Arrange</span>
<span class="t" style="left:1138.9px;top:106px;font-size:12px;line-height:14.4px;color:#a6a6a6;letter-spacing:0.278px;transform:translateY(0.40px);transform-origin:0 50%;">Quick</span>
<span class="t" style="left:1133.8px;top:122px;font-size:12px;line-height:14.4px;color:#a6a6a6;letter-spacing:-0.438px;transform:translateY(0.10px);transform-origin:0 50%;">Styles</span>
<span class="t" style="left:1199.8px;top:72px;font-size:12px;line-height:14.4px;color:#a6a6a6;letter-spacing:-0.308px;transform:translateY(0.40px);transform-origin:0 50%;">Shape Fill</span>
<span class="t" style="left:1199.8px;top:95px;font-size:12px;line-height:14.4px;color:#a6a6a6;letter-spacing:-0.089px;transform:translateY(0.40px);transform-origin:0 50%;">Shape Outline</span>
<span class="t" style="left:1199.8px;top:118px;font-size:12px;line-height:14.4px;color:#a6a6a6;letter-spacing:-0.317px;transform:translateY(0.40px);transform-origin:0 50%;">Shape Effects</span>
<span class="t" style="left:1328.1px;top:72px;font-size:12px;line-height:14.4px;color:#333333;letter-spacing:-0.148px;transform:translateY(0.40px);transform-origin:0 50%;">Find</span>
<span class="t" style="left:1328.1px;top:95px;font-size:12px;line-height:14.4px;color:#333333;letter-spacing:-0.439px;transform:translateY(0.20px);transform-origin:0 50%;">Replace</span>
<span class="t" style="left:1328.1px;top:118px;font-size:12px;line-height:14.4px;color:#333333;letter-spacing:-0.432px;transform:translateY(0.40px);transform-origin:0 50%;">Select</span>
<span class="t" style="left:316.3px;top:110px;font-size:12.5px;line-height:15.0px;color:#a6a6a6;font-weight:700;transform:translateY(0.10px);transform-origin:0 50%;">B</span>
<span class="t" style="left:341.5px;top:109px;font-size:13.5px;line-height:16.2px;color:#a6a6a6;font-weight:700;font-style:italic;transform:translateY(0.50px);transform-origin:0 50%;font-family:'Liberation Serif',serif;">I</span>
<span class="t" style="left:364px;top:109px;font-size:12.5px;line-height:15.0px;color:#a6a6a6;font-weight:700;transform:translateY(0.60px);transform-origin:0 50%;text-decoration:underline;">U</span>
<span class="t" style="left:388.5px;top:109px;font-size:14px;line-height:16.8px;color:#a6a6a6;font-weight:700;transform:translateY(0.20px);transform-origin:0 50%;text-shadow:1.5px 1.5px 0 #d2d2d2;">S</span>
<span class="t" style="left:407.0px;top:111px;font-size:11px;line-height:13.2px;color:#a6a6a6;letter-spacing:0.375px;text-decoration:line-through;">abc</span>
<span class="t" style="left:433.1px;top:108px;font-size:10.5px;line-height:12.6px;color:#a6a6a6;letter-spacing:1.366px;transform:translateY(0.70px);transform-origin:0 50%;">AV</span>
<span class="t" style="left:470.5px;top:109px;font-size:13px;line-height:15.6px;color:#a6a6a6;letter-spacing:0.094px;transform:translateY(0.80px);transform-origin:0 50%;">Aa</span>
<span class="t" style="left:557.5px;top:108px;font-size:14.5px;line-height:17.4px;color:#a6a6a6;transform:translateY(0.90px);transform-origin:0 50%;">A</span>
<span class="t" style="left:518.2px;top:79px;font-size:13.5px;line-height:16.2px;color:#a6a6a6;transform:translateY(0.90px);transform-origin:0 50%;">A</span>
<span class="t" style="left:543px;top:82px;font-size:10.5px;line-height:12.6px;color:#a6a6a6;transform:translateY(0.70px);transform-origin:0 50%;">A</span>
<span class="t" style="left:12px;top:319px;font-size:15px;line-height:18.0px;color:#444;transform:translateY(0.60px);transform-origin:0 50%;">2</span>
<span class="t" style="left:12px;top:466px;font-size:15px;line-height:18.0px;color:#444;transform:translateY(0.60px);transform-origin:0 50%;">3</span>
<span class="t" style="left:12px;top:613px;font-size:15px;line-height:18.0px;color:#444;transform:translateY(0.60px);transform-origin:0 50%;">4</span>
<span class="t" style="left:12px;top:760px;font-size:15px;line-height:18.0px;color:#444;transform:translateY(0.60px);transform-origin:0 50%;">5</span>
<span class="t" style="left:515.5px;top:107px;font-size:9.5px;line-height:11.4px;color:#b0b0b0;font-weight:700;letter-spacing:-0.094px;transform:translateY(0.50px);transform-origin:0 50%;">ab</span>
<span class="t" style="left:1308.6px;top:92px;font-size:10.5px;line-height:12.6px;color:#555;font-weight:700;transform:translateY(0.30px);transform-origin:0 50%;">a</span>
<span class="t" style="left:1314.3px;top:92px;font-size:10.5px;line-height:12.6px;color:#9a5fb4;font-weight:700;transform:translateY(0.30px);transform-origin:0 50%;">b</span>
<span class="t" style="left:1313.9px;top:99px;font-size:10.5px;line-height:12.6px;color:#555;font-weight:700;transform:translateY(0.50px);transform-origin:0 50%;">a</span>
<span class="t" style="left:1319.7px;top:99px;font-size:10.5px;line-height:12.6px;color:#3d6fa6;font-weight:700;transform:translateY(0.50px);transform-origin:0 50%;">c</span>
<span class="t" style="left:86.1px;top:214px;font-size:13px;line-height:15.6px;color:#000;font-weight:700;letter-spacing:0.676px;transform:translateY(1.00px) scaleX(1.08);transform-origin:0 50%;-webkit-text-stroke:0.5px #000;">HOW TO INSERT</span>
<span class="t" style="left:59.1px;top:230px;font-size:13px;line-height:15.6px;color:#000;font-weight:700;letter-spacing:0.576px;transform:translateY(0.90px) scaleX(1.08);transform-origin:0 50%;-webkit-text-stroke:0.5px #000;">A TABLE OF CONTENTS</span>
<span class="t" style="left:84.5px;top:246px;font-size:13px;line-height:15.6px;color:#000;font-weight:700;letter-spacing:0.788px;transform:translateY(0.90px) scaleX(1.08);transform-origin:0 50%;-webkit-text-stroke:0.5px #000;">IN POWERPOINT</span>
<span class="t" style="left:132.2px;top:286px;font-size:6px;line-height:7.2px;color:#444;letter-spacing:-0.063px;transform:translateY(0.80px) scaleX(0.72);transform-origin:0 50%;">DJ ABAY-ABAY</span>
<span class="t" style="left:59.5px;top:334px;font-size:10.8px;line-height:13.0px;color:#1a1a1a;letter-spacing:0.316px;transform:translateY(0.12px) scaleX(1.06);transform-origin:0 50%;">TABLE OF CONTENT</span>
<span class="t" style="left:59.5px;top:490px;font-size:10.5px;line-height:12.6px;color:#1a1a1a;letter-spacing:0.697px;transform:translateY(0.60px) scaleX(1.06);transform-origin:0 50%;">AGENDA</span>
<span class="t" style="left:134.8px;top:637px;font-size:10.8px;line-height:13.0px;color:#1a1a1a;letter-spacing:0.468px;transform:translateY(0.32px) scaleX(1.06);transform-origin:0 50%;">INTRODUCTION</span>
<span class="t" style="left:98.2px;top:820px;font-size:10.8px;line-height:13.0px;color:#1a1a1a;letter-spacing:0.231px;transform:translateY(0.12px) scaleX(1.06);transform-origin:0 50%;">PRIMARY GOALS</span>
<span class="t" style="left:134.8px;top:671px;font-size:4.6px;line-height:5.5px;color:#7a7a7a;letter-spacing:0.106px;transform:translateY(0.24px) scaleX(0.8);transform-origin:0 50%;">At Contoso, we empower organizations to foster collaborative</span>
<span class="t" style="left:134.8px;top:677px;font-size:4.6px;line-height:5.5px;color:#7a7a7a;letter-spacing:0.167px;transform:translateY(0.14px) scaleX(0.8);transform-origin:0 50%;">thinking to further drive workplace innovation.</span>
<span class="t" style="left:134.8px;top:693px;font-size:4.6px;line-height:5.5px;color:#7a7a7a;letter-spacing:0.115px;transform:translateY(0.24px) scaleX(0.8);transform-origin:0 50%;">By closing the loop and leveraging agile frameworks, we help</span>
<span class="t" style="left:134.8px;top:699px;font-size:4.6px;line-height:5.5px;color:#7a7a7a;letter-spacing:0.116px;transform:translateY(0.14px) scaleX(0.8);transform-origin:0 50%;">businesses grow organically and foster a consumer-first</span>
<span class="t" style="left:134.8px;top:705px;font-size:4.6px;line-height:5.5px;color:#7a7a7a;letter-spacing:0.268px;transform:translateY(0.14px) scaleX(0.8);transform-origin:0 50%;">mindset.</span>
<span class="t" style="left:591px;top:338px;font-size:60px;line-height:72.0px;color:#000;font-weight:700;letter-spacing:2.883px;transform:translateY(0.30px) scaleX(1.08);transform-origin:0 50%;-webkit-text-stroke:1.6px #000;">HOW</span>
<span class="t" style="left:780px;top:338px;font-size:60px;line-height:72.0px;color:#000;font-weight:700;letter-spacing:1.083px;transform:translateY(0.30px) scaleX(1.08);transform-origin:0 50%;-webkit-text-stroke:1.6px #000;">TO</span>
<span class="t" style="left:893.3px;top:338px;font-size:60px;line-height:72.0px;color:#000;font-weight:700;letter-spacing:0.197px;transform:translateY(0.30px) scaleX(1.08);transform-origin:0 50%;-webkit-text-stroke:1.6px #000;">INSERT</span>
<span class="t" style="left:470.4px;top:405px;font-size:60px;line-height:72.0px;color:#000;font-weight:700;transform:translateY(0.50px) scaleX(1.155);transform-origin:0 50%;-webkit-text-stroke:1.6px #000;">A</span>
<span class="t" style="left:542.0px;top:405px;font-size:60px;line-height:72.0px;color:#000;font-weight:700;letter-spacing:-0.411px;transform:translateY(0.50px) scaleX(1.08);transform-origin:0 50%;-webkit-text-stroke:1.6px #000;">TABLE</span>
<span class="t" style="left:776px;top:405px;font-size:60px;line-height:72.0px;color:#000;font-weight:700;letter-spacing:-0.921px;transform:translateY(0.50px) scaleX(1.08);transform-origin:0 50%;-webkit-text-stroke:1.6px #000;">OF</span>
<span class="t" style="left:893px;top:405px;font-size:60px;line-height:72.0px;color:#000;font-weight:700;letter-spacing:0.212px;transform:translateY(0.50px) scaleX(1.08);transform-origin:0 50%;-webkit-text-stroke:1.6px #000;">CONTENTS</span>
<span class="t" style="left:585.2px;top:472px;font-size:60px;line-height:72.0px;color:#000;font-weight:700;letter-spacing:4.815px;transform:translateY(0.70px) scaleX(1.08);transform-origin:0 50%;-webkit-text-stroke:1.6px #000;">IN</span>
<span class="t" style="left:682px;top:472px;font-size:60px;line-height:72.0px;color:#000;font-weight:700;letter-spacing:1.253px;transform:translateY(0.70px) scaleX(1.08);transform-origin:0 50%;-webkit-text-stroke:1.6px #000;">POWERPOINT</span><!-- annotation -->
<div class="a" style="left:60px;top:34px;width:60px;height:30px;border:3px solid #000"></div>
<div class="a" style="left:163px;top:61.8px;width:140.3px;height:97.2px;border:3.2px solid #000"></div>
<svg style="left:0;top:0" width="1440" height="200" viewBox="0 0 1440 200" fill="none" stroke="#000" stroke-linecap="round" stroke-linejoin="miter">
 <path d="M425.6 162.6 L425.6 45.4 L129 45.4" stroke-width="4.8"/>
 <path d="M144.6 37.2 L128.6 45.3 L144.2 53.6" stroke-width="5.6" stroke-linejoin="round"/>
 <path d="M89.6 70.8 L89.6 107.1 L156 107.1" stroke-width="5"/>
 <path d="M140.8 89.4 L157.5 106.9 L142.8 121" stroke-width="6" stroke-linejoin="round"/>
</svg>

</div>
</body></html>
